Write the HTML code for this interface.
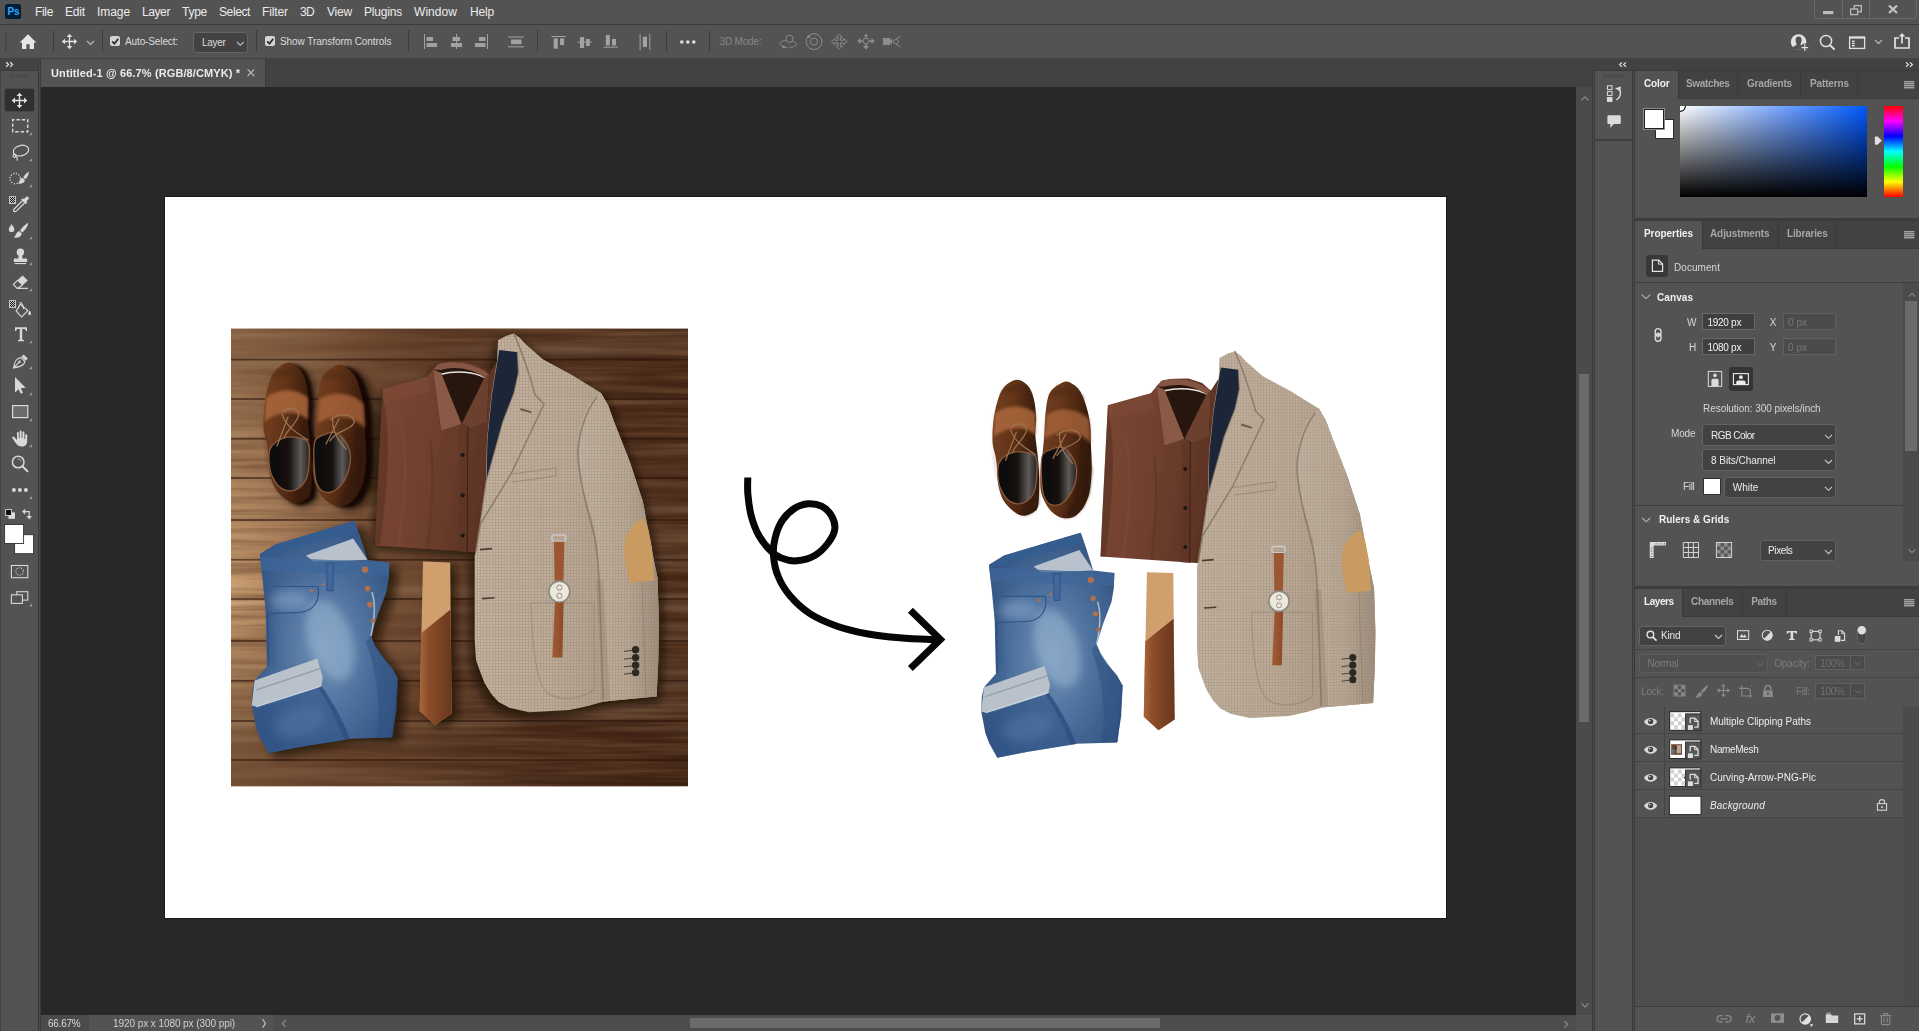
<!DOCTYPE html>
<html lang="en">
<head>
<meta charset="utf-8">
<title>Untitled-1 @ 66.7% (RGB/8/CMYK) *</title>
<style>
*{box-sizing:border-box;margin:0;padding:0}
html,body{width:1919px;height:1031px;overflow:hidden;background:#535353}
body{position:relative;font-family:"Liberation Sans",sans-serif;font-size:11px;color:#dcdcdc;line-height:1}
.a{position:absolute}
.t{position:absolute;white-space:nowrap;line-height:14px;height:14px}
svg{position:absolute;overflow:visible}
/* structural */
#menubar{left:0;top:0;width:1919px;height:24px;background:#535353}
#menuline{left:0;top:24px;width:1919px;height:1px;background:#3a3a3a}
#optbar{left:0;top:25px;width:1919px;height:33px;background:#535353}
#optline{left:0;top:58px;width:1919px;height:1px;background:#424242}
#tabbar{left:41px;top:59px;width:1552px;height:28px;background:#424242}
#canvas{left:41px;top:87px;width:1535px;height:928px;background:#282828}
#doc{left:165px;top:197px;width:1281px;height:721px;background:#fff;box-shadow:0 0 0 1px #1a1a1a}
.menu{font-size:13px;color:#ececec;top:5px}
.sep{position:absolute;width:1px;background:#3e3e3e;top:30px;height:22px}
.lbl{font-size:11px;color:#d6d6d6}
.dim{color:#8a8a8a}
</style>
</head>
<body>
<!-- ===== MENU BAR ===== -->
<div id="menubar" class="a"></div>
<div id="menuline" class="a"></div>
<!-- ===== OPTIONS BAR ===== -->
<div id="optbar" class="a"></div>
<div id="optline" class="a"></div>
<!-- ===== TAB BAR + CANVAS ===== -->
<div id="tabbar" class="a"></div>
<div id="canvas" class="a"></div>
<div id="doc" class="a"></div>
<!--ART-START-->
<svg width="1919" height="1031" viewBox="0 0 1919 1031" style="left:0;top:0">
<defs>
<filter id="fWood" x="0" y="0" width="100%" height="100%"><feTurbulence type="fractalNoise" baseFrequency="0.006 0.16" numOctaves="3" seed="7" result="n"/><feColorMatrix in="n" type="matrix" values="0 0 0 0 .16  0 0 0 0 .07  0 0 0 0 .03  1.5 0 0 0 -0.56"/></filter>
<filter id="fWood2" x="0" y="0" width="100%" height="100%"><feTurbulence type="fractalNoise" baseFrequency="0.004 0.07" numOctaves="2" seed="3" result="n"/><feColorMatrix in="n" type="matrix" values="0 0 0 0 1  0 0 0 0 .78  0 0 0 0 .55  0 1.7 0 0 -0.7"/></filter>
<filter id="fSh" x="-20%" y="-20%" width="140%" height="140%"><feGaussianBlur stdDeviation="4"/></filter>
<filter id="fB2" x="-20%" y="-20%" width="140%" height="140%"><feGaussianBlur stdDeviation="1.6"/></filter>
<filter id="fB4" x="-30%" y="-30%" width="160%" height="160%"><feGaussianBlur stdDeviation="4.5"/></filter>
<filter id="fSoft" x="-5%" y="-5%" width="110%" height="110%"><feGaussianBlur stdDeviation="0.55"/></filter>
<linearGradient id="gWood" x1="0" y1="0" x2="1" y2="0"><stop offset="0" stop-color="#ab815b"/><stop offset=".1" stop-color="#9c7351"/><stop offset=".28" stop-color="#80563a"/><stop offset=".48" stop-color="#65412b"/><stop offset=".68" stop-color="#51311f"/><stop offset="1" stop-color="#482918"/></linearGradient>
<linearGradient id="gWoodV" x1="0" y1="0" x2="0" y2="1"><stop offset="0" stop-color="#2a1206" stop-opacity=".3"/><stop offset=".3" stop-color="#2a1206" stop-opacity=".06"/><stop offset=".6" stop-color="#2a1206" stop-opacity=".1"/><stop offset="1" stop-color="#2a1206" stop-opacity=".45"/></linearGradient>
<linearGradient id="gShoe" x1="0" y1="0" x2="1" y2="0.25"><stop offset="0" stop-color="#74401f"/><stop offset=".45" stop-color="#643519"/><stop offset="1" stop-color="#35190a"/></linearGradient>
<linearGradient id="gIn" x1="0" y1="0" x2="1" y2="0"><stop offset="0" stop-color="#0c0a09"/><stop offset=".5" stop-color="#151211"/><stop offset=".78" stop-color="#5e5b59"/><stop offset="1" stop-color="#262221"/></linearGradient>
<linearGradient id="gShirt" x1="0" y1="0" x2="1" y2="0.25"><stop offset="0" stop-color="#7a4735"/><stop offset=".5" stop-color="#71412f"/><stop offset="1" stop-color="#5c3324"/></linearGradient>
<radialGradient id="gJeans" cx=".5" cy=".55" r=".62"><stop offset="0" stop-color="#7090b4"/><stop offset=".5" stop-color="#4c6f9c"/><stop offset="1" stop-color="#2f4f7d"/></radialGradient>
<linearGradient id="gTie" x1="0" y1="0" x2="1" y2="0"><stop offset="0" stop-color="#a96638"/><stop offset=".3" stop-color="#8a4c2a"/><stop offset="1" stop-color="#6a371d"/></linearGradient>
<linearGradient id="gStrap" x1="0" y1="0" x2="1" y2="0"><stop offset="0" stop-color="#a35c34"/><stop offset="1" stop-color="#8a4a28"/></linearGradient>
<linearGradient id="gBlz" x1="0" y1="0" x2="1" y2="0.15"><stop offset="0" stop-color="#c3b3a1"/><stop offset=".55" stop-color="#bcab98"/><stop offset="1" stop-color="#a99986"/></linearGradient>
<linearGradient id="gSlv" x1="0" y1="0" x2="1" y2="0"><stop offset="0" stop-color="#c2b3a2"/><stop offset=".6" stop-color="#b8a895"/><stop offset="1" stop-color="#a08f7e"/></linearGradient>
<pattern id="pCheck" width="3" height="3" patternUnits="userSpaceOnUse"><rect width="3" height="3" fill="none"/><path d="M0 .5 H3 M.5 0 V3" stroke="#85705c" stroke-width=".7"/></pattern>
<radialGradient id="gWoodL" gradientUnits="userSpaceOnUse" cx="225" cy="590" r="150"><stop offset="0" stop-color="#ecbf8c" stop-opacity=".6"/><stop offset=".5" stop-color="#e0b080" stop-opacity=".25"/><stop offset="1" stop-color="#e0b080" stop-opacity="0"/></radialGradient>
<clipPath id="cJeans"><path d="M260.0 557.0 L260.0 554.0 L275.4 544.4 L354.5 520.8 L360.0 536.0 L367.5 559.7 L389.4 562.4 L388.8 578.0 L386.4 592.0 L378.0 614.0 L371.0 636.0 L375.0 646.0 L381.0 655.5 L392.0 668.0 L397.6 678.0 L396.4 710.0 L392.0 737.4 L350.0 738.8 L300.0 747.0 L268.5 753.2 L260.0 738.0 L256.0 727.5 L251.8 705.5 L252.4 690.0 L254.6 680.4 L267.0 666.5 L265.7 611.0 L263.0 583.0 Z"/></clipPath>
<clipPath id="cPhoto"><rect x="231" y="328.4" width="457" height="458"/></clipPath>
</defs>
<g clip-path="url(#cPhoto)"><rect x="231" y="328.4" width="457" height="458" fill="url(#gWood)"/><rect x="231" y="328.4" width="457" height="458" fill="url(#gWoodV)"/><rect x="231" y="328.4" width="457" height="458" fill="url(#gWoodL)"/><rect x="231" y="328.4" width="457" height="458" filter="url(#fWood)" fill="#000"/><rect x="231" y="328.4" width="457" height="458" filter="url(#fWood2)" opacity=".2"/><rect x="231" y="358.7" width="457" height="1.8" fill="#2a140a" opacity=".6"/><rect x="231" y="398.1" width="457" height="1.8" fill="#2a140a" opacity=".6"/><rect x="231" y="437.8" width="457" height="1.8" fill="#2a140a" opacity=".6"/><rect x="231" y="477.1" width="457" height="1.8" fill="#2a140a" opacity=".6"/><rect x="231" y="519.1" width="457" height="1.8" fill="#2a140a" opacity=".6"/><rect x="231" y="558.9" width="457" height="1.8" fill="#2a140a" opacity=".6"/><rect x="231" y="598.1" width="457" height="1.8" fill="#2a140a" opacity=".6"/><rect x="231" y="640.1" width="457" height="1.8" fill="#2a140a" opacity=".6"/><rect x="231" y="679.9" width="457" height="1.8" fill="#2a140a" opacity=".6"/><rect x="231" y="720.1" width="457" height="1.8" fill="#2a140a" opacity=".6"/><rect x="231" y="759.1" width="457" height="1.8" fill="#2a140a" opacity=".6"/><g fill="#120804" opacity=".7" filter="url(#fSh)"><path d="M288.4 362.8 L275.2 370.5 L268.2 386.0 L264.3 406.2 L263.5 427.9 L266.6 441.9 L268.2 454.3 L269.7 472.9 L275.2 488.4 L286.0 499.3 L295.3 503.2 L306.2 499.3 L310.8 491.5 L311.6 463.6 L310.1 441.9 L307.7 420.2 L308.5 401.5 L306.2 382.9 L300.0 369.0 Z" transform="translate(7 4)"/><path d="M337.2 365.1 L323.3 375.2 L318.6 393.8 L317.1 417.1 L315.5 435.7 L313.2 454.3 L313.2 476.0 L317.1 488.4 L324.8 499.3 L335.7 505.5 L348.1 503.9 L357.4 494.6 L363.6 479.1 L365.9 455.8 L365.1 429.5 L364.4 409.3 L360.5 390.7 L354.3 375.2 L346.5 367.4 Z" transform="translate(12 5)"/><path d="M382.6 389.0 L427.0 376.8 L433.0 369.6 L438.0 364.0 L450.0 361.6 L466.0 361.4 L480.0 366.0 L489.0 374.0 L497.0 361.5 L494.0 395.0 L489.0 440.0 L486.5 480.0 L482.0 520.0 L478.0 552.4 L375.0 545.4 L377.0 500.0 L380.0 440.0 Z" transform="translate(-3 5)"/><path d="M260.0 557.0 L260.0 554.0 L275.4 544.4 L354.5 520.8 L360.0 536.0 L367.5 559.7 L389.4 562.4 L388.8 578.0 L386.4 592.0 L378.0 614.0 L371.0 636.0 L375.0 646.0 L381.0 655.5 L392.0 668.0 L397.6 678.0 L396.4 710.0 L392.0 737.4 L350.0 738.8 L300.0 747.0 L268.5 753.2 L260.0 738.0 L256.0 727.5 L251.8 705.5 L252.4 690.0 L254.6 680.4 L267.0 666.5 L265.7 611.0 L263.0 583.0 Z" transform="translate(8 5)"/><path d="M423.0 561.6 L450.2 562.4 L451.6 713.7 L434.9 724.8 L419.7 710.9 Z" transform="translate(6 4)"/><path d="M498.0 340.2 L506.0 336.0 L513.8 333.4 L520.0 338.0 L525.0 343.6 L542.8 359.2 L572.0 375.0 L600.8 392.7 L608.0 405.0 L614.0 421.7 L629.8 461.8 L643.0 502.0 L652.0 551.0 L657.6 578.3 L659.0 623.0 L658.4 660.0 L656.6 696.6 L630.0 699.0 L604.0 701.4 L588.0 706.0 L569.5 710.0 L529.4 712.3 L509.3 707.8 L498.6 702.0 L491.5 694.3 L484.5 683.0 L480.3 672.0 L476.0 660.0 L474.7 640.0 L474.7 556.0 L476.0 551.0 L480.0 524.0 L486.0 480.0 L487.0 440.0 L491.5 395.0 L497.0 361.5 Z" transform="translate(-5 6)"/><path d="M498.0 340.2 L506.0 336.0 L513.8 333.4 L520.0 338.0 L525.0 343.6 L542.8 359.2 L572.0 375.0 L600.8 392.7 L608.0 405.0 L614.0 421.7 L629.8 461.8 L643.0 502.0 L652.0 551.0 L657.6 578.3 L659.0 623.0 L658.4 660.0 L656.6 696.6 L630.0 699.0 L604.0 701.4 L588.0 706.0 L569.5 710.0 L529.4 712.3 L509.3 707.8 L498.6 702.0 L491.5 694.3 L484.5 683.0 L480.3 672.0 L476.0 660.0 L474.7 640.0 L474.7 556.0 L476.0 551.0 L480.0 524.0 L486.0 480.0 L487.0 440.0 L491.5 395.0 L497.0 361.5 Z" transform="translate(4 5)"/></g><g fill="#0c0502" opacity=".8" filter="url(#fB2)"><path d="M288.4 362.8 C284.3 363.1 278.6 366.6 275.2 370.5 C271.8 374.4 270.0 380.1 268.2 386.0 C266.4 391.9 265.1 399.2 264.3 406.2 C263.5 413.2 263.1 421.9 263.5 427.9 C263.9 433.8 265.8 437.5 266.6 441.9 C267.4 446.3 267.7 449.1 268.2 454.3 C268.7 459.5 268.5 467.2 269.7 472.9 C270.9 478.6 272.5 484.0 275.2 488.4 C277.9 492.8 282.6 496.8 286.0 499.3 C289.4 501.8 291.9 503.2 295.3 503.2 C298.7 503.2 303.6 501.2 306.2 499.3 C308.8 497.4 309.9 497.4 310.8 491.5 C311.7 485.6 311.7 471.9 311.6 463.6 C311.5 455.3 310.8 449.1 310.1 441.9 C309.5 434.7 308.0 426.9 307.7 420.2 C307.4 413.5 308.8 407.7 308.5 401.5 C308.2 395.3 307.6 388.3 306.2 382.9 C304.8 377.5 303.0 372.4 300.0 369.0 C297.0 365.6 292.5 362.6 288.4 362.8 Z" transform="translate(5 2)"/><path d="M337.2 365.1 C333.3 366.4 326.4 370.4 323.3 375.2 C320.2 380.0 319.6 386.8 318.6 393.8 C317.6 400.8 317.6 410.1 317.1 417.1 C316.6 424.1 316.1 429.5 315.5 435.7 C314.9 441.9 313.6 447.6 313.2 454.3 C312.8 461.0 312.5 470.3 313.2 476.0 C313.9 481.7 315.2 484.5 317.1 488.4 C319.0 492.3 321.7 496.4 324.8 499.3 C327.9 502.2 331.8 504.7 335.7 505.5 C339.6 506.3 344.5 505.7 348.1 503.9 C351.7 502.1 354.8 498.7 357.4 494.6 C360.0 490.5 362.2 485.6 363.6 479.1 C365.0 472.6 365.6 464.1 365.9 455.8 C366.1 447.5 365.4 437.2 365.1 429.5 C364.9 421.8 365.2 415.8 364.4 409.3 C363.6 402.8 362.2 396.4 360.5 390.7 C358.8 385.0 356.6 379.1 354.3 375.2 C352.0 371.3 349.4 369.1 346.5 367.4 C343.6 365.7 341.1 363.8 337.2 365.1 Z" transform="translate(7 2)"/></g></g>
<g filter="url(#fSoft)" clip-path="url(#cPhoto)"><path d="M288.4 362.8 C284.3 363.1 278.6 366.6 275.2 370.5 C271.8 374.4 270.0 380.1 268.2 386.0 C266.4 391.9 265.1 399.2 264.3 406.2 C263.5 413.2 263.1 421.9 263.5 427.9 C263.9 433.8 265.8 437.5 266.6 441.9 C267.4 446.3 267.7 449.1 268.2 454.3 C268.7 459.5 268.5 467.2 269.7 472.9 C270.9 478.6 272.5 484.0 275.2 488.4 C277.9 492.8 282.6 496.8 286.0 499.3 C289.4 501.8 291.9 503.2 295.3 503.2 C298.7 503.2 303.6 501.2 306.2 499.3 C308.8 497.4 309.9 497.4 310.8 491.5 C311.7 485.6 311.7 471.9 311.6 463.6 C311.5 455.3 310.8 449.1 310.1 441.9 C309.5 434.7 308.0 426.9 307.7 420.2 C307.4 413.5 308.8 407.7 308.5 401.5 C308.2 395.3 307.6 388.3 306.2 382.9 C304.8 377.5 303.0 372.4 300.0 369.0 C297.0 365.6 292.5 362.6 288.4 362.8 Z" fill="url(#gShoe)"/><path d="M337.2 365.1 C333.3 366.4 326.4 370.4 323.3 375.2 C320.2 380.0 319.6 386.8 318.6 393.8 C317.6 400.8 317.6 410.1 317.1 417.1 C316.6 424.1 316.1 429.5 315.5 435.7 C314.9 441.9 313.6 447.6 313.2 454.3 C312.8 461.0 312.5 470.3 313.2 476.0 C313.9 481.7 315.2 484.5 317.1 488.4 C319.0 492.3 321.7 496.4 324.8 499.3 C327.9 502.2 331.8 504.7 335.7 505.5 C339.6 506.3 344.5 505.7 348.1 503.9 C351.7 502.1 354.8 498.7 357.4 494.6 C360.0 490.5 362.2 485.6 363.6 479.1 C365.0 472.6 365.6 464.1 365.9 455.8 C366.1 447.5 365.4 437.2 365.1 429.5 C364.9 421.8 365.2 415.8 364.4 409.3 C363.6 402.8 362.2 396.4 360.5 390.7 C358.8 385.0 356.6 379.1 354.3 375.2 C352.0 371.3 349.4 369.1 346.5 367.4 C343.6 365.7 341.1 363.8 337.2 365.1 Z" fill="url(#gShoe)"/><g filter="url(#fB2)"><path d="M266 398 C276 388 298 388 308 398 L308 420 C298 410 278 410 264.5 422 Z" fill="#b06a3e" opacity=".8"/><path d="M319 400 C330 390 352 392 363.6 404 L365 428 C352 415 332 413 317 424 Z" fill="#b06a3e" opacity=".72"/><path d="M271 378 C279 366 298 364 305.6 380 C299 374 280 374.5 271 378 Z" fill="#4a2513" opacity=".55"/><path d="M321.6 380 C330 368 352 368 359.6 384 C350 377 333 376.6 321.6 380 Z" fill="#4a2513" opacity=".55"/><path d="M306 425 L311.6 463 L310.8 491 L305 500 L295 503.4 C306 482 305 450 302 428 Z" fill="#341809" opacity=".75"/><path d="M360 425 L366 456 L363.6 480 L357 495 L347 504 L336 505.6 C354 486 357 452 354 428 Z" fill="#341809" opacity=".8"/><path d="M264 425 C265 450 268 470 276 489 L270 474 L266 442 Z" fill="#4a2513" opacity=".5"/></g><path d="M270.5 448.1 C272.6 444.2 277.3 440.6 281.4 438.8 C285.5 437.0 290.9 436.7 295.3 437.2 C299.7 437.7 305.4 438.5 307.7 441.9 C310.0 445.3 309.6 451.2 309.3 457.4 C309.1 463.6 308.5 473.7 306.2 479.1 C303.9 484.5 299.4 488.4 295.3 490.0 C291.2 491.6 285.3 490.7 281.4 488.4 C277.5 486.1 274.2 480.4 272.1 476.0 C270.0 471.6 269.3 466.6 269.0 462.0 C268.7 457.4 268.4 452.0 270.5 448.1 Z" fill="url(#gIn)" stroke="#8a5a3c" stroke-width="1.3"/><path d="M314.7 441.9 C316.0 437.2 318.2 437.2 321.7 435.7 C325.2 434.1 331.6 431.3 335.7 432.6 C339.8 433.9 344.1 439.3 346.5 443.4 C348.9 447.5 350.4 452.0 350.4 457.4 C350.4 462.8 348.9 470.6 346.5 476.0 C344.1 481.4 339.6 487.4 335.7 490.0 C331.8 492.6 326.5 492.8 323.3 491.5 C320.1 490.2 317.9 486.8 316.3 482.2 C314.8 477.6 314.3 470.3 314.0 463.6 C313.7 456.9 313.4 446.5 314.7 441.9 Z" fill="url(#gIn)" stroke="#8a5a3c" stroke-width="1.3"/><g stroke="#9c7452" stroke-width="1.2" fill="none" stroke-linecap="round"><path d="M283 412 C290 405 301 409 298 417 C295 425 287 430 284 438 M282 414 C286 427 298 434 308 440 M288 417 L277 446"/><path d="M330 420 C340 412 356 414 354 423 C350 431 336 430 330 441 M333 417 C331 429 338 441 346 449 M339 419 L326 444"/></g><path d="M382.6 389.0 L427.0 376.8 L433.0 369.6 L438.0 364.0 L450.0 361.6 L466.0 361.4 L480.0 366.0 L489.0 374.0 L497.0 361.5 L494.0 395.0 L489.0 440.0 L486.5 480.0 L482.0 520.0 L478.0 552.4 L375.0 545.4 L377.0 500.0 L380.0 440.0 Z" fill="url(#gShirt)"/><path d="M382.6 389 L427 376.8 L431 392 L384 403 Z" fill="#7d4a37" opacity=".6"/><path d="M384 403 C392 440 386 500 380 545 L375 545.4 L377 500 L380 440 L382.6 389 Z" fill="#4e2a1d" opacity=".45"/><path d="M400 420 C410 460 404 510 398 547" stroke="#7e4c38" stroke-width="3" fill="none" opacity=".45"/><path d="M430 440 C436 480 430 520 428 548" stroke="#54301f" stroke-width="2.4" fill="none" opacity=".4"/><path d="M438 364 C452 360.6 470 360.6 489 374 L487 422 L471.4 428.4 L461.4 424 L441 431 L433 369.6 Z" fill="#26150f"/><path d="M441 374.2 C456 370.4 474 371.4 487 378.6" stroke="#e9e6e2" stroke-width="1.5" fill="none"/><path d="M433 369.6 L441 372.8 L461.6 424 L441 431 Z" fill="#8b5a46"/><path d="M489 374 L484 378.4 L461.6 424 L471.4 428.4 L487 422 Z" fill="#6c3f2e"/><path d="M433 369.6 L438 364 C452 360.6 470 360.6 489 374 L484.6 378 C470 366.8 452 366.6 440.6 370 Z" fill="#865644"/><path d="M459 426 L467.6 427.4 L467 552 L458.4 551.4 Z" fill="#5e3626" opacity=".7"/><path d="M467.8 427 L467.2 552" stroke="#3b2018" stroke-width="1"/><circle cx="462.6" cy="455" r="2.1" fill="#1c1412"/><circle cx="462.6" cy="495.3" r="2.1" fill="#1c1412"/><circle cx="462.6" cy="535.5" r="2.1" fill="#1c1412"/><path d="M260.0 557.0 L260.0 554.0 L275.4 544.4 L354.5 520.8 L360.0 536.0 L367.5 559.7 L389.4 562.4 L388.8 578.0 L386.4 592.0 L378.0 614.0 L371.0 636.0 L375.0 646.0 L381.0 655.5 L392.0 668.0 L397.6 678.0 L396.4 710.0 L392.0 737.4 L350.0 738.8 L300.0 747.0 L268.5 753.2 L260.0 738.0 L256.0 727.5 L251.8 705.5 L252.4 690.0 L254.6 680.4 L267.0 666.5 L265.7 611.0 L263.0 583.0 Z" fill="url(#gJeans)"/><path d="M305.9 555.6 L353.2 538.6 L367.4 559.8 L314 561.8 Z" fill="#b9c2cc"/><path d="M260 557 L389.4 562.4 L388.6 575.5 L261.6 570.5 Z" fill="#3f679a" opacity=".75"/><path d="M260 554 L275.4 544.4 L354.5 520.8 L358 531 L280 553 L262 558 Z" fill="#355d90" opacity=".8"/><g clip-path="url(#cJeans)"><g filter="url(#fB4)"><ellipse cx="330" cy="640" rx="22" ry="42" fill="#9bb8d6" opacity=".55" transform="rotate(-18 330 640)"/><ellipse cx="300" cy="722" rx="26" ry="14" fill="#88a8cc" opacity=".45" transform="rotate(-14 300 722)"/><ellipse cx="290" cy="600" rx="18" ry="10" fill="#93b2d2" opacity=".45"/><path d="M262 583 L267 666 L274 664 L270 584 Z" fill="#2c4f80" opacity=".6"/></g></g><path d="M272 586.5 H318 C320.5 600 314 611 300 612.4 L270 613.6" stroke="#2f5486" stroke-width="1.2" fill="none"/><path d="M267.4 612 L268.4 666 M392 737 C394 712 397 690 397.2 678" stroke="#2a4b7a" stroke-width="2" fill="none" opacity=".6"/><path d="M371 636 C376 650 390 664 397 678 L392 737.4 L376 737.8 C382 706 376 670 366 642 Z" fill="#2f5284" opacity=".55"/><path d="M372 592 C376 604 374 622 371 636" stroke="#c4ccd6" stroke-width="1.6" fill="none" opacity=".8"/><path d="M258 708.8 L321 686.5 C332 702 344 724 349.6 739.4 L300 747 L268.5 753.2 L260 738 L256 727.5 Z" fill="#2f5386" opacity=".55"/><path d="M254.6 680.4 L317.2 658.6 L322.8 677.6 L321.4 686 L256.4 706.8 L251.8 705.5 Z" fill="#b9c1cb"/><path d="M256 690 L320.5 668.5" stroke="#8d99a8" stroke-width="1.4" opacity=".8"/><path d="M256.4 706.8 L321.4 686" stroke="#dfe5ec" stroke-width="1.2" opacity=".8"/><path d="M321.4 686 C332 700 344 722 350 738.8 L344 739.6 C338 722 328 702 318 688 Z" fill="#294a7c" opacity=".6"/><circle cx="365" cy="569.6" r="3.2" fill="#b3714a"/><circle cx="367.4" cy="588.6" r="2.8" fill="#b3714a"/><circle cx="369.8" cy="604.6" r="2.8" fill="#b3714a"/><circle cx="372.6" cy="620.6" r="2.2" fill="#a86a46"/><circle cx="311.4" cy="590.6" r="1.6" fill="#b3714a"/><circle cx="323.4" cy="584.6" r="1.4" fill="#b3714a"/><path d="M326.6 563 L333.4 563.4 L333 591 L327 590.6 Z" fill="#3f679a" stroke="#2b4c7c" stroke-width=".8"/><path d="M423.0 561.6 L450.2 562.4 L451.6 713.7 L434.9 724.8 L419.7 710.9 Z" fill="#cf9f6d"/><path d="M421.1 633.2 L450.5 609.6 L451.6 713.7 L434.9 724.8 L419.7 710.9 Z" fill="url(#gTie)"/><path d="M498.0 340.2 L506.0 336.0 L513.8 333.4 L520.0 338.0 L525.0 343.6 L542.8 359.2 L572.0 375.0 L600.8 392.7 L608.0 405.0 L614.0 421.7 L629.8 461.8 L643.0 502.0 L652.0 551.0 L657.6 578.3 L659.0 623.0 L658.4 660.0 L656.6 696.6 L630.0 699.0 L604.0 701.4 L588.0 706.0 L569.5 710.0 L529.4 712.3 L509.3 707.8 L498.6 702.0 L491.5 694.3 L484.5 683.0 L480.3 672.0 L476.0 660.0 L474.7 640.0 L474.7 556.0 L476.0 551.0 L480.0 524.0 L486.0 480.0 L487.0 440.0 L491.5 395.0 L497.0 361.5 Z" fill="url(#gBlz)"/><path d="M498.0 340.2 L506.0 336.0 L513.8 333.4 L520.0 338.0 L525.0 343.6 L542.8 359.2 L572.0 375.0 L600.8 392.7 L608.0 405.0 L614.0 421.7 L629.8 461.8 L643.0 502.0 L652.0 551.0 L657.6 578.3 L659.0 623.0 L658.4 660.0 L656.6 696.6 L630.0 699.0 L604.0 701.4 L588.0 706.0 L569.5 710.0 L529.4 712.3 L509.3 707.8 L498.6 702.0 L491.5 694.3 L484.5 683.0 L480.3 672.0 L476.0 660.0 L474.7 640.0 L474.7 556.0 L476.0 551.0 L480.0 524.0 L486.0 480.0 L487.0 440.0 L491.5 395.0 L497.0 361.5 Z" fill="url(#pCheck)" opacity=".32"/><path d="M499.3 350.0 L517.4 352.3 L518.4 372.6 L514.0 392.7 L502.8 421.7 L491.7 461.8 L486.6 480.0 L487.4 439.5 L491.9 395.0 L497.4 361.5 Z" fill="#1d2737"/><path d="M600.8 392.7 L608.0 405.0 L614.0 421.7 L629.8 461.8 L643.0 502.0 L652.0 551.0 L657.6 578.3 L659.0 623.0 L658.4 660.0 L656.6 696.6 L630.0 699.0 L604.0 701.4 L600.4 640.0 L600.0 595.0 L595.0 527.0 L584.0 493.0 L578.0 455.0 L580.0 428.0 L587.0 406.0 Z" fill="url(#gSlv)"/><path d="M600.8 392.7 L608.0 405.0 L614.0 421.7 L629.8 461.8 L643.0 502.0 L652.0 551.0 L657.6 578.3 L659.0 623.0 L658.4 660.0 L656.6 696.6 L630.0 699.0 L604.0 701.4 L600.4 640.0 L600.0 595.0 L595.0 527.0 L584.0 493.0 L578.0 455.0 L580.0 428.0 L587.0 406.0 Z" fill="url(#pCheck)" opacity=".3"/><path d="M597 397 C584 412 577.6 440 578 456 C580 492 592 520 596 545 C599 565 600 590 603 700" stroke="#7f7060" stroke-width="1.6" fill="none" opacity=".75"/><path d="M596 580 L603 700 L610 700 L603 580 Z" fill="#8c7c6c" opacity=".35"/><path d="M517.4 352.3 L518.4 372.6 L514 392.7 L502.8 421.7 L491.7 461.8 L486.6 480 L476 551" stroke="#8a7968" stroke-width="1.2" fill="none" opacity=".7"/><path d="M513.8 333.4 C522 352 530 376 535.2 395 L544 404 L511.5 473 L480.3 524.3 L476 551" stroke="#85735f" stroke-width="1.5" fill="none" opacity=".85"/><path d="M520.4 409 L531.4 412.4" stroke="#6a5a4c" stroke-width="2"/><path d="M512 474 L556 468 L556 476 L512 482" stroke="#96846f" stroke-width="1.1" fill="none" opacity=".8"/><path d="M531 603 H594 V690 C580 700 560 702 546 692 C536 680 532 650 531 603 Z" stroke="#96846f" stroke-width="1.1" fill="none" opacity=".7"/><path d="M482 598.6 L494.6 597.8" stroke="#4a3d33" stroke-width="1.6"/><path d="M480 549.6 L492 548.6" stroke="#4a3d33" stroke-width="1.6"/><path d="M643.4 517.4 L648.6 530.0 L652.0 548.0 L654.4 580.6 L629.8 583.0 L625.6 566.0 L624.0 550.0 L625.8 536.0 L633.0 525.0 Z" fill="#c99b60"/><path d="M642 583 L646 697" stroke="#8c7c6c" stroke-width="1" opacity=".7"/><circle cx="635.6" cy="649.8" r="3.7" fill="#2a2c24"/><path d="M624 651.4 L632 650.4" stroke="#4a4036" stroke-width="1"/><circle cx="635.6" cy="657.6" r="3.7" fill="#2a2c24"/><path d="M624 659.2 L632 658.2" stroke="#4a4036" stroke-width="1"/><circle cx="635.6" cy="665.3" r="3.7" fill="#2a2c24"/><path d="M624 666.9 L632 665.9" stroke="#4a4036" stroke-width="1"/><circle cx="635.6" cy="672.6" r="3.7" fill="#2a2c24"/><path d="M624 674.2 L632 673.2" stroke="#4a4036" stroke-width="1"/><path d="M553.9 540 L564.4 540 L563.4 581 L554.6 581 Z" fill="#9b5631"/><path d="M554.8 602 L563.6 602 L562.4 657.6 L552.4 657.6 Z" fill="url(#gStrap)"/><rect x="552" y="535" width="13.6" height="6" rx="1.6" fill="none" stroke="#c9c9c9" stroke-width="1.6"/><circle cx="559.4" cy="591.6" r="11.3" fill="#8c8a86"/><circle cx="559.4" cy="591.6" r="9.6" fill="#ece8dc"/><circle cx="559.4" cy="587.6" r="2.6" fill="none" stroke="#8a867c" stroke-width=".9"/><circle cx="559.4" cy="595.8" r="2.6" fill="none" stroke="#8a867c" stroke-width=".9"/></g>
<g filter="url(#fSoft)" transform="translate(737.5 28.6) scale(0.968)"><path d="M288.4 362.8 C284.3 363.1 278.6 366.6 275.2 370.5 C271.8 374.4 270.0 380.1 268.2 386.0 C266.4 391.9 265.1 399.2 264.3 406.2 C263.5 413.2 263.1 421.9 263.5 427.9 C263.9 433.8 265.8 437.5 266.6 441.9 C267.4 446.3 267.7 449.1 268.2 454.3 C268.7 459.5 268.5 467.2 269.7 472.9 C270.9 478.6 272.5 484.0 275.2 488.4 C277.9 492.8 282.6 496.8 286.0 499.3 C289.4 501.8 291.9 503.2 295.3 503.2 C298.7 503.2 303.6 501.2 306.2 499.3 C308.8 497.4 309.9 497.4 310.8 491.5 C311.7 485.6 311.7 471.9 311.6 463.6 C311.5 455.3 310.8 449.1 310.1 441.9 C309.5 434.7 308.0 426.9 307.7 420.2 C307.4 413.5 308.8 407.7 308.5 401.5 C308.2 395.3 307.6 388.3 306.2 382.9 C304.8 377.5 303.0 372.4 300.0 369.0 C297.0 365.6 292.5 362.6 288.4 362.8 Z" fill="url(#gShoe)"/><path d="M337.2 365.1 C333.3 366.4 326.4 370.4 323.3 375.2 C320.2 380.0 319.6 386.8 318.6 393.8 C317.6 400.8 317.6 410.1 317.1 417.1 C316.6 424.1 316.1 429.5 315.5 435.7 C314.9 441.9 313.6 447.6 313.2 454.3 C312.8 461.0 312.5 470.3 313.2 476.0 C313.9 481.7 315.2 484.5 317.1 488.4 C319.0 492.3 321.7 496.4 324.8 499.3 C327.9 502.2 331.8 504.7 335.7 505.5 C339.6 506.3 344.5 505.7 348.1 503.9 C351.7 502.1 354.8 498.7 357.4 494.6 C360.0 490.5 362.2 485.6 363.6 479.1 C365.0 472.6 365.6 464.1 365.9 455.8 C366.1 447.5 365.4 437.2 365.1 429.5 C364.9 421.8 365.2 415.8 364.4 409.3 C363.6 402.8 362.2 396.4 360.5 390.7 C358.8 385.0 356.6 379.1 354.3 375.2 C352.0 371.3 349.4 369.1 346.5 367.4 C343.6 365.7 341.1 363.8 337.2 365.1 Z" fill="url(#gShoe)"/><g filter="url(#fB2)"><path d="M266 398 C276 388 298 388 308 398 L308 420 C298 410 278 410 264.5 422 Z" fill="#b06a3e" opacity=".8"/><path d="M319 400 C330 390 352 392 363.6 404 L365 428 C352 415 332 413 317 424 Z" fill="#b06a3e" opacity=".72"/><path d="M271 378 C279 366 298 364 305.6 380 C299 374 280 374.5 271 378 Z" fill="#4a2513" opacity=".55"/><path d="M321.6 380 C330 368 352 368 359.6 384 C350 377 333 376.6 321.6 380 Z" fill="#4a2513" opacity=".55"/><path d="M306 425 L311.6 463 L310.8 491 L305 500 L295 503.4 C306 482 305 450 302 428 Z" fill="#341809" opacity=".75"/><path d="M360 425 L366 456 L363.6 480 L357 495 L347 504 L336 505.6 C354 486 357 452 354 428 Z" fill="#341809" opacity=".8"/><path d="M264 425 C265 450 268 470 276 489 L270 474 L266 442 Z" fill="#4a2513" opacity=".5"/></g><path d="M270.5 448.1 C272.6 444.2 277.3 440.6 281.4 438.8 C285.5 437.0 290.9 436.7 295.3 437.2 C299.7 437.7 305.4 438.5 307.7 441.9 C310.0 445.3 309.6 451.2 309.3 457.4 C309.1 463.6 308.5 473.7 306.2 479.1 C303.9 484.5 299.4 488.4 295.3 490.0 C291.2 491.6 285.3 490.7 281.4 488.4 C277.5 486.1 274.2 480.4 272.1 476.0 C270.0 471.6 269.3 466.6 269.0 462.0 C268.7 457.4 268.4 452.0 270.5 448.1 Z" fill="url(#gIn)" stroke="#8a5a3c" stroke-width="1.3"/><path d="M314.7 441.9 C316.0 437.2 318.2 437.2 321.7 435.7 C325.2 434.1 331.6 431.3 335.7 432.6 C339.8 433.9 344.1 439.3 346.5 443.4 C348.9 447.5 350.4 452.0 350.4 457.4 C350.4 462.8 348.9 470.6 346.5 476.0 C344.1 481.4 339.6 487.4 335.7 490.0 C331.8 492.6 326.5 492.8 323.3 491.5 C320.1 490.2 317.9 486.8 316.3 482.2 C314.8 477.6 314.3 470.3 314.0 463.6 C313.7 456.9 313.4 446.5 314.7 441.9 Z" fill="url(#gIn)" stroke="#8a5a3c" stroke-width="1.3"/><g stroke="#9c7452" stroke-width="1.2" fill="none" stroke-linecap="round"><path d="M283 412 C290 405 301 409 298 417 C295 425 287 430 284 438 M282 414 C286 427 298 434 308 440 M288 417 L277 446"/><path d="M330 420 C340 412 356 414 354 423 C350 431 336 430 330 441 M333 417 C331 429 338 441 346 449 M339 419 L326 444"/></g><path d="M382.6 389.0 L427.0 376.8 L433.0 369.6 L438.0 364.0 L450.0 361.6 L466.0 361.4 L480.0 366.0 L489.0 374.0 L497.0 361.5 L494.0 395.0 L489.0 440.0 L486.5 480.0 L482.0 520.0 L478.0 552.4 L375.0 545.4 L377.0 500.0 L380.0 440.0 Z" fill="url(#gShirt)"/><path d="M382.6 389 L427 376.8 L431 392 L384 403 Z" fill="#7d4a37" opacity=".6"/><path d="M384 403 C392 440 386 500 380 545 L375 545.4 L377 500 L380 440 L382.6 389 Z" fill="#4e2a1d" opacity=".45"/><path d="M400 420 C410 460 404 510 398 547" stroke="#7e4c38" stroke-width="3" fill="none" opacity=".45"/><path d="M430 440 C436 480 430 520 428 548" stroke="#54301f" stroke-width="2.4" fill="none" opacity=".4"/><path d="M438 364 C452 360.6 470 360.6 489 374 L487 422 L471.4 428.4 L461.4 424 L441 431 L433 369.6 Z" fill="#26150f"/><path d="M441 374.2 C456 370.4 474 371.4 487 378.6" stroke="#e9e6e2" stroke-width="1.5" fill="none"/><path d="M433 369.6 L441 372.8 L461.6 424 L441 431 Z" fill="#8b5a46"/><path d="M489 374 L484 378.4 L461.6 424 L471.4 428.4 L487 422 Z" fill="#6c3f2e"/><path d="M433 369.6 L438 364 C452 360.6 470 360.6 489 374 L484.6 378 C470 366.8 452 366.6 440.6 370 Z" fill="#865644"/><path d="M459 426 L467.6 427.4 L467 552 L458.4 551.4 Z" fill="#5e3626" opacity=".7"/><path d="M467.8 427 L467.2 552" stroke="#3b2018" stroke-width="1"/><circle cx="462.6" cy="455" r="2.1" fill="#1c1412"/><circle cx="462.6" cy="495.3" r="2.1" fill="#1c1412"/><circle cx="462.6" cy="535.5" r="2.1" fill="#1c1412"/><path d="M260.0 557.0 L260.0 554.0 L275.4 544.4 L354.5 520.8 L360.0 536.0 L367.5 559.7 L389.4 562.4 L388.8 578.0 L386.4 592.0 L378.0 614.0 L371.0 636.0 L375.0 646.0 L381.0 655.5 L392.0 668.0 L397.6 678.0 L396.4 710.0 L392.0 737.4 L350.0 738.8 L300.0 747.0 L268.5 753.2 L260.0 738.0 L256.0 727.5 L251.8 705.5 L252.4 690.0 L254.6 680.4 L267.0 666.5 L265.7 611.0 L263.0 583.0 Z" fill="url(#gJeans)"/><path d="M305.9 555.6 L353.2 538.6 L367.4 559.8 L314 561.8 Z" fill="#b9c2cc"/><path d="M260 557 L389.4 562.4 L388.6 575.5 L261.6 570.5 Z" fill="#3f679a" opacity=".75"/><path d="M260 554 L275.4 544.4 L354.5 520.8 L358 531 L280 553 L262 558 Z" fill="#355d90" opacity=".8"/><g clip-path="url(#cJeans)"><g filter="url(#fB4)"><ellipse cx="330" cy="640" rx="22" ry="42" fill="#9bb8d6" opacity=".55" transform="rotate(-18 330 640)"/><ellipse cx="300" cy="722" rx="26" ry="14" fill="#88a8cc" opacity=".45" transform="rotate(-14 300 722)"/><ellipse cx="290" cy="600" rx="18" ry="10" fill="#93b2d2" opacity=".45"/><path d="M262 583 L267 666 L274 664 L270 584 Z" fill="#2c4f80" opacity=".6"/></g></g><path d="M272 586.5 H318 C320.5 600 314 611 300 612.4 L270 613.6" stroke="#2f5486" stroke-width="1.2" fill="none"/><path d="M267.4 612 L268.4 666 M392 737 C394 712 397 690 397.2 678" stroke="#2a4b7a" stroke-width="2" fill="none" opacity=".6"/><path d="M371 636 C376 650 390 664 397 678 L392 737.4 L376 737.8 C382 706 376 670 366 642 Z" fill="#2f5284" opacity=".55"/><path d="M372 592 C376 604 374 622 371 636" stroke="#c4ccd6" stroke-width="1.6" fill="none" opacity=".8"/><path d="M258 708.8 L321 686.5 C332 702 344 724 349.6 739.4 L300 747 L268.5 753.2 L260 738 L256 727.5 Z" fill="#2f5386" opacity=".55"/><path d="M254.6 680.4 L317.2 658.6 L322.8 677.6 L321.4 686 L256.4 706.8 L251.8 705.5 Z" fill="#b9c1cb"/><path d="M256 690 L320.5 668.5" stroke="#8d99a8" stroke-width="1.4" opacity=".8"/><path d="M256.4 706.8 L321.4 686" stroke="#dfe5ec" stroke-width="1.2" opacity=".8"/><path d="M321.4 686 C332 700 344 722 350 738.8 L344 739.6 C338 722 328 702 318 688 Z" fill="#294a7c" opacity=".6"/><circle cx="365" cy="569.6" r="3.2" fill="#b3714a"/><circle cx="367.4" cy="588.6" r="2.8" fill="#b3714a"/><circle cx="369.8" cy="604.6" r="2.8" fill="#b3714a"/><circle cx="372.6" cy="620.6" r="2.2" fill="#a86a46"/><circle cx="311.4" cy="590.6" r="1.6" fill="#b3714a"/><circle cx="323.4" cy="584.6" r="1.4" fill="#b3714a"/><path d="M326.6 563 L333.4 563.4 L333 591 L327 590.6 Z" fill="#3f679a" stroke="#2b4c7c" stroke-width=".8"/><path d="M423.0 561.6 L450.2 562.4 L451.6 713.7 L434.9 724.8 L419.7 710.9 Z" fill="#cf9f6d"/><path d="M421.1 633.2 L450.5 609.6 L451.6 713.7 L434.9 724.8 L419.7 710.9 Z" fill="url(#gTie)"/><path d="M498.0 340.2 L506.0 336.0 L513.8 333.4 L520.0 338.0 L525.0 343.6 L542.8 359.2 L572.0 375.0 L600.8 392.7 L608.0 405.0 L614.0 421.7 L629.8 461.8 L643.0 502.0 L652.0 551.0 L657.6 578.3 L659.0 623.0 L658.4 660.0 L656.6 696.6 L630.0 699.0 L604.0 701.4 L588.0 706.0 L569.5 710.0 L529.4 712.3 L509.3 707.8 L498.6 702.0 L491.5 694.3 L484.5 683.0 L480.3 672.0 L476.0 660.0 L474.7 640.0 L474.7 556.0 L476.0 551.0 L480.0 524.0 L486.0 480.0 L487.0 440.0 L491.5 395.0 L497.0 361.5 Z" fill="url(#gBlz)"/><path d="M498.0 340.2 L506.0 336.0 L513.8 333.4 L520.0 338.0 L525.0 343.6 L542.8 359.2 L572.0 375.0 L600.8 392.7 L608.0 405.0 L614.0 421.7 L629.8 461.8 L643.0 502.0 L652.0 551.0 L657.6 578.3 L659.0 623.0 L658.4 660.0 L656.6 696.6 L630.0 699.0 L604.0 701.4 L588.0 706.0 L569.5 710.0 L529.4 712.3 L509.3 707.8 L498.6 702.0 L491.5 694.3 L484.5 683.0 L480.3 672.0 L476.0 660.0 L474.7 640.0 L474.7 556.0 L476.0 551.0 L480.0 524.0 L486.0 480.0 L487.0 440.0 L491.5 395.0 L497.0 361.5 Z" fill="url(#pCheck)" opacity=".32"/><path d="M499.3 350.0 L517.4 352.3 L518.4 372.6 L514.0 392.7 L502.8 421.7 L491.7 461.8 L486.6 480.0 L487.4 439.5 L491.9 395.0 L497.4 361.5 Z" fill="#1d2737"/><path d="M600.8 392.7 L608.0 405.0 L614.0 421.7 L629.8 461.8 L643.0 502.0 L652.0 551.0 L657.6 578.3 L659.0 623.0 L658.4 660.0 L656.6 696.6 L630.0 699.0 L604.0 701.4 L600.4 640.0 L600.0 595.0 L595.0 527.0 L584.0 493.0 L578.0 455.0 L580.0 428.0 L587.0 406.0 Z" fill="url(#gSlv)"/><path d="M600.8 392.7 L608.0 405.0 L614.0 421.7 L629.8 461.8 L643.0 502.0 L652.0 551.0 L657.6 578.3 L659.0 623.0 L658.4 660.0 L656.6 696.6 L630.0 699.0 L604.0 701.4 L600.4 640.0 L600.0 595.0 L595.0 527.0 L584.0 493.0 L578.0 455.0 L580.0 428.0 L587.0 406.0 Z" fill="url(#pCheck)" opacity=".3"/><path d="M597 397 C584 412 577.6 440 578 456 C580 492 592 520 596 545 C599 565 600 590 603 700" stroke="#7f7060" stroke-width="1.6" fill="none" opacity=".75"/><path d="M596 580 L603 700 L610 700 L603 580 Z" fill="#8c7c6c" opacity=".35"/><path d="M517.4 352.3 L518.4 372.6 L514 392.7 L502.8 421.7 L491.7 461.8 L486.6 480 L476 551" stroke="#8a7968" stroke-width="1.2" fill="none" opacity=".7"/><path d="M513.8 333.4 C522 352 530 376 535.2 395 L544 404 L511.5 473 L480.3 524.3 L476 551" stroke="#85735f" stroke-width="1.5" fill="none" opacity=".85"/><path d="M520.4 409 L531.4 412.4" stroke="#6a5a4c" stroke-width="2"/><path d="M512 474 L556 468 L556 476 L512 482" stroke="#96846f" stroke-width="1.1" fill="none" opacity=".8"/><path d="M531 603 H594 V690 C580 700 560 702 546 692 C536 680 532 650 531 603 Z" stroke="#96846f" stroke-width="1.1" fill="none" opacity=".7"/><path d="M482 598.6 L494.6 597.8" stroke="#4a3d33" stroke-width="1.6"/><path d="M480 549.6 L492 548.6" stroke="#4a3d33" stroke-width="1.6"/><path d="M643.4 517.4 L648.6 530.0 L652.0 548.0 L654.4 580.6 L629.8 583.0 L625.6 566.0 L624.0 550.0 L625.8 536.0 L633.0 525.0 Z" fill="#c99b60"/><path d="M642 583 L646 697" stroke="#8c7c6c" stroke-width="1" opacity=".7"/><circle cx="635.6" cy="649.8" r="3.7" fill="#2a2c24"/><path d="M624 651.4 L632 650.4" stroke="#4a4036" stroke-width="1"/><circle cx="635.6" cy="657.6" r="3.7" fill="#2a2c24"/><path d="M624 659.2 L632 658.2" stroke="#4a4036" stroke-width="1"/><circle cx="635.6" cy="665.3" r="3.7" fill="#2a2c24"/><path d="M624 666.9 L632 665.9" stroke="#4a4036" stroke-width="1"/><circle cx="635.6" cy="672.6" r="3.7" fill="#2a2c24"/><path d="M624 674.2 L632 673.2" stroke="#4a4036" stroke-width="1"/><path d="M553.9 540 L564.4 540 L563.4 581 L554.6 581 Z" fill="#9b5631"/><path d="M554.8 602 L563.6 602 L562.4 657.6 L552.4 657.6 Z" fill="url(#gStrap)"/><rect x="552" y="535" width="13.6" height="6" rx="1.6" fill="none" stroke="#c9c9c9" stroke-width="1.6"/><circle cx="559.4" cy="591.6" r="11.3" fill="#8c8a86"/><circle cx="559.4" cy="591.6" r="9.6" fill="#ece8dc"/><circle cx="559.4" cy="587.6" r="2.6" fill="none" stroke="#8a867c" stroke-width=".9"/><circle cx="559.4" cy="595.8" r="2.6" fill="none" stroke="#8a867c" stroke-width=".9"/></g>
<path d="M747.8 477.4 C747.8 480.1 747.3 487.1 747.8 493.5 C748.4 499.9 749.3 508.7 751.2 515.8 C753.1 522.8 755.8 530.1 759.0 535.8 C762.2 541.6 766.4 546.6 770.2 550.3 C773.9 554.1 776.8 556.4 781.3 558.1 C785.8 559.9 791.3 561.3 796.9 560.8 C802.5 560.4 809.6 558.4 814.8 555.5 C820.0 552.5 824.8 547.4 828.1 543.0 C831.5 538.6 834.3 533.7 834.8 529.2 C835.4 524.6 833.7 519.6 831.5 515.8 C829.3 511.9 825.4 508.2 821.5 506.2 C817.6 504.2 812.5 503.4 808.1 503.7 C803.6 504.1 799.0 505.4 794.7 508.2 C790.4 510.9 785.7 515.2 782.4 520.2 C779.1 525.2 776.5 532.1 775.1 538.1 C773.6 544.0 773.0 549.6 773.5 555.9 C774.0 562.2 775.2 569.3 778.0 576.0 C780.7 582.7 784.8 589.7 790.2 596.1 C795.6 602.4 802.5 608.9 810.3 613.9 C818.1 618.9 827.4 622.8 837.1 626.2 C846.7 629.5 857.9 632.1 868.3 634.0 C878.7 635.9 889.1 636.9 899.5 637.8 C909.9 638.7 923.9 639.3 930.8 639.6 C937.6 639.9 939.1 639.6 940.8 639.6" stroke="#060606" stroke-width="7" fill="none" stroke-linecap="butt" stroke-linejoin="round"/><path d="M910.4 610.2 L940.4 639.6 L910.4 668.6" stroke="#060606" stroke-width="7" fill="none" stroke-linecap="butt" stroke-linejoin="miter"/>
</svg>
<!--ART-END-->
<!-- menus -->
<span class="t" style="left:35px;top:5px;font-size:12px;letter-spacing:-0.34px;color:#ececec">File</span>
<span class="t" style="left:65px;top:5px;font-size:12px;letter-spacing:-0.17px;color:#ececec">Edit</span>
<span class="t" style="left:97px;top:5px;font-size:12px;letter-spacing:-0.07px;color:#ececec">Image</span>
<span class="t" style="left:142px;top:5px;font-size:12px;letter-spacing:-0.41px;color:#ececec">Layer</span>
<span class="t" style="left:182px;top:5px;font-size:12px;letter-spacing:-0.25px;color:#ececec">Type</span>
<span class="t" style="left:219px;top:5px;font-size:12px;letter-spacing:-0.39px;color:#ececec">Select</span>
<span class="t" style="left:262px;top:5px;font-size:12px;letter-spacing:-0.11px;color:#ececec">Filter</span>
<span class="t" style="left:300px;top:5px;font-size:12px;letter-spacing:-0.67px;color:#ececec">3D</span>
<span class="t" style="left:327px;top:5px;font-size:12px;letter-spacing:-0.20px;color:#ececec">View</span>
<span class="t" style="left:364px;top:5px;font-size:12px;letter-spacing:-0.19px;color:#ececec">Plugins</span>
<span class="t" style="left:414px;top:5px;font-size:12px;letter-spacing:0.05px;color:#ececec">Window</span>
<span class="t" style="left:470px;top:5px;font-size:12px;letter-spacing:-0.17px;color:#ececec">Help</span>

<!--MENUS2-->
<!-- options bar content -->
<div class="sep" style="left:53px"></div><div class="sep" style="left:102px"></div><div class="sep" style="left:256px"></div>
<div class="sep" style="left:408px"></div><div class="sep" style="left:537px"></div><div class="sep" style="left:666px"></div><div class="sep" style="left:709px"></div>
<div class="a" style="left:193px;top:32px;width:55px;height:21px;background:#424242;border:1px solid #646464;border-radius:3px"></div>
<div class="a" style="left:110px;top:36.2px;width:10.3px;height:10.3px;background:#d4d4d4;border-radius:2px"></div>
<div class="a" style="left:265px;top:36.2px;width:10.3px;height:10.3px;background:#d4d4d4;border-radius:2px"></div>
<svg width="1919" height="60" viewBox="0 0 1919 60" style="left:0;top:0">
 <!-- grip -->
 <g fill="#3e3e3e"><rect x="5" y="32" width="2" height="1"/><rect x="5" y="34" width="2" height="1"/><rect x="5" y="36" width="2" height="1"/><rect x="5" y="38" width="2" height="1"/><rect x="5" y="40" width="2" height="1"/><rect x="5" y="42" width="2" height="1"/><rect x="5" y="44" width="2" height="1"/><rect x="5" y="46" width="2" height="1"/><rect x="5" y="48" width="2" height="1"/><rect x="5" y="50" width="2" height="1"/></g>
 <!-- home -->
 <path d="M28 34.3 L36.3 42.6 L34 42.6 L34 49 L29.6 49 L29.6 44.3 L26.4 44.3 L26.4 49 L22 49 L22 42.6 L19.7 42.6 Z" fill="#e6e6e6"/>
 <!-- move tool icon -->
 <g stroke="#e0e0e0" stroke-width="1.3" fill="none"><path d="M69.5 36 V47 M64 41.5 H75"/></g>
 <path d="M69.5 33.8 L72.3 37 H66.7 Z M69.5 49.2 L72.3 46 H66.7 Z M61.8 41.5 L65 38.7 V44.3 Z M77.2 41.5 L74 38.7 V44.3 Z" fill="#e0e0e0"/>
 <path d="M87 41 L90.5 44.5 L94 41" stroke="#bdbdbd" stroke-width="1.1" fill="none"/>
 <!-- checks -->
 <path d="M112.2 41.4 L114.4 43.7 L118.2 38.9" stroke="#2a2a2a" stroke-width="1.7" fill="none"/>
 <path d="M267.2 41.4 L269.4 43.7 L273.2 38.9" stroke="#2a2a2a" stroke-width="1.7" fill="none"/>
 <path d="M237 42 L240.3 45.3 L243.6 42" stroke="#c4c4c4" stroke-width="1.1" fill="none"/>
 <!-- align icons -->
 <g fill="#a2a2a2">
  <rect x="424" y="34" width="1" height="15"/><rect x="426.5" y="37" width="6.5" height="4"/><rect x="426.5" y="43" width="10.5" height="4"/>
  <rect x="456" y="34" width="1" height="15"/><rect x="452.5" y="37" width="7.5" height="4"/><rect x="451" y="43" width="11" height="4"/>
  <rect x="487" y="34" width="1" height="15"/><rect x="479" y="37" width="6.5" height="4"/><rect x="475" y="43" width="10.5" height="4"/>
  <rect x="508" y="36.5" width="16" height="1"/><rect x="511" y="39.5" width="10.5" height="4.7"/><rect x="508" y="46.3" width="16" height="1"/>
  <rect x="551.5" y="36" width="14.5" height="1"/><rect x="553.7" y="38.3" width="4.1" height="10.4"/><rect x="560" y="38.3" width="4.1" height="6.7"/>
  <rect x="577.5" y="41.6" width="14.3" height="1"/><rect x="580" y="37" width="4.1" height="11"/><rect x="586" y="39" width="3.8" height="7"/>
  <rect x="603.7" y="46.7" width="14.3" height="1"/><rect x="605.8" y="35" width="4" height="10.5"/><rect x="612" y="39" width="4" height="6.5"/>
  <rect x="639.6" y="34" width="1" height="16"/><rect x="649.3" y="34" width="1" height="16"/><rect x="642.8" y="36.7" width="4.2" height="10.3"/>
 </g>
 <g fill="#dedede"><circle cx="681.8" cy="42" r="1.8"/><circle cx="687.8" cy="42" r="1.8"/><circle cx="693.8" cy="42" r="1.8"/></g>
 <!-- 3D mode icons (dim) -->
 <g stroke="#8c8c8c" fill="none" stroke-width="1">
  <circle cx="789.5" cy="38.8" r="3.6"/><path d="M785.3 40.3 C779 41.5 778 45 783.5 46.6 M793.2 41.2 C797.5 43 798 47 789.5 47.3"/>
  <circle cx="814" cy="41.6" r="7.9"/><circle cx="814" cy="41.6" r="3.6"/>
  <path d="M839.3 34 L842.3 37.3 H840.6 V40.3 H843.6 V38.6 L847.2 41.6 L843.6 44.6 V42.9 H840.6 V45.9 H842.3 L839.3 49.2 L836.3 45.9 H838 V42.9 H835 V44.6 L831.4 41.6 L835 38.6 V40.3 H838 V37.3 H836.3 Z"/>
  <circle cx="866" cy="41" r="2.9"/>
  <path d="M892.5 41.5 L900.5 36 M892.5 41.5 L900.5 47 M896.3 38.9 L899 41.5 L896.3 44.1"/>
 </g>
 <g fill="#8c8c8c">
  <path d="M782 45.2 L788.2 47.6 L782.8 48.2 Z"/><path d="M806.5 36.2 L810.5 34.6 L809.8 38.4 Z"/>
  <path d="M866 33.8 L868.3 36.3 H866.9 V37.5 H865.1 V36.3 H863.7 Z M866 49.6 L869.3 46 H867.2 V44.6 H864.8 V46 H862.7 Z M857 41 L860.6 38 V40 H862.4 V42 H860.6 V44 Z M875 41 L871.4 38 V40 H869.6 V42 H871.4 V44 Z"/>
  <path d="M883 38 H890 V40 L892 38.6 V44.4 L890 43 V45 H883 Z"/>
 </g>
 <!-- right icons -->
 <circle cx="1798.6" cy="42" r="7.8" fill="#e2e2e2"/>
 <path d="M1798.6 36.6 C1801 36.6 1802 38.6 1801.6 41 C1801.3 42.8 1800.6 43.4 1800.6 44.4 C1800.6 45.4 1803.5 46 1804.6 47.5 C1803 49 1801 49.8 1798.6 49.8 C1796.2 49.8 1794.2 49 1792.6 47.5 C1793.7 46 1796.6 45.4 1796.6 44.4 C1796.6 43.4 1795.9 42.8 1795.6 41 C1795.2 38.6 1796.2 36.6 1798.6 36.6 Z" fill="#535353"/>
 <circle cx="1804.8" cy="47.6" r="4.2" fill="#535353"/>
 <path d="M1804.8 44.2 V51 M1801.4 47.6 H1808.2" stroke="#e2e2e2" stroke-width="1.1"/>
 <circle cx="1826" cy="41" r="5.6" stroke="#e0e0e0" stroke-width="1.5" fill="none"/><path d="M1830 45.2 L1834 49" stroke="#e0e0e0" stroke-width="2" stroke-linecap="round"/>
 <rect x="1849.6" y="37.2" width="15" height="11.2" stroke="#e0e0e0" stroke-width="1.3" fill="none"/><rect x="1849" y="36.6" width="16.2" height="2" fill="#e0e0e0"/>
 <rect x="1852" y="40.6" width="2.6" height="1.4" fill="#e0e0e0"/><rect x="1852" y="42.8" width="2.6" height="1.4" fill="#e0e0e0"/><rect x="1852" y="45" width="2.6" height="1.4" fill="#e0e0e0"/>
 <path d="M1875 40 L1878.5 43.5 L1882 40" stroke="#bdbdbd" stroke-width="1.1" fill="none"/>
 <path d="M1899 38 H1895 V48 H1909 V38 H1905" stroke="#e2e2e2" stroke-width="1.7" fill="none"/><path d="M1902 35.5 V43.5" stroke="#e2e2e2" stroke-width="1.7"/><path d="M1902 33 L1905.2 36.6 H1898.8 Z" fill="#e2e2e2"/>
 <!-- window controls -->
 <path d="M1814.5 0 V15.5 Q1814.5 18.5 1817.5 18.5 H1913.5 Q1916.5 18.5 1916.5 15.5 V0" stroke="#6a6a6a" fill="none"/>
 <path d="M1842.5 0 V18 M1869.5 0 V18" stroke="#6a6a6a"/>
 <rect x="1823" y="11" width="10.3" height="3.2" fill="#bcbcbc"/>
 <rect x="1854.3" y="5.6" width="7" height="6.2" stroke="#bcbcbc" stroke-width="1.3" fill="none"/><rect x="1850.6" y="9" width="7" height="5.6" stroke="#bcbcbc" stroke-width="1.3" fill="#535353"/>
 <path d="M1889 5.5 L1897 13 M1897 5.5 L1889 13" stroke="#c4c4c4" stroke-width="2.2"/>
 <!-- Ps logo -->
 <rect x="5" y="4" width="16" height="15" rx="2.5" fill="#001e36"/>
</svg>
<span class="t" style="left:7.6px;top:4.8px;font-size:10px;font-weight:700;color:#31a8ff;letter-spacing:-0.3px">Ps</span>
<span class="t" style="left:125px;top:34.5px;font-size:10px;letter-spacing:-0.12px;color:#dadada">Auto-Select:</span>
<span class="t" style="left:202px;top:35.5px;font-size:10px;letter-spacing:-0.30px;color:#dadada">Layer</span>
<span class="t" style="left:280px;top:34.5px;font-size:10px;letter-spacing:-0.06px;color:#dadada">Show Transform Controls</span>
<span class="t" style="left:719.5px;top:34.5px;font-size:10px;letter-spacing:-0.17px;color:#868686">3D Mode:</span>

<!--OPTIONS2-->
<!-- left toolbar -->
<div class="a" style="left:0;top:59px;width:39px;height:972px;background:#535353"></div>
<div class="a" style="left:0;top:59px;width:1px;height:972px;background:#424242"></div>
<div class="a" style="left:1px;top:59px;width:38px;height:11px;background:#434343"></div>
<div class="a" style="left:1px;top:70px;width:38px;height:1px;background:#3c3c3c"></div>
<div class="a" style="left:38px;top:59px;width:3px;height:972px;background:linear-gradient(to right,#3b3b3b 0,#3b3b3b 1px,#4a4a4a 1px,#4a4a4a 2px,#3b3b3b 2px,#3b3b3b 3px)"></div>
<div class="a" style="left:4px;top:88px;width:31px;height:24px;background:#303030;border:1px solid #484848;border-radius:3px"></div>
<svg width="44" height="620" viewBox="0 0 44 620" style="left:0;top:0">
 <path d="M6.2 62.3 L8.6 64.5 L6.2 66.7 M10.2 62.3 L12.6 64.5 L10.2 66.7" stroke="#e4e4e4" stroke-width="1.2" fill="none"/>
 <path d="M10.5 74 V78 M12.5 74 V78 M14.5 74 V78 M16.5 74 V78 M18.5 74 V78 M20.5 74 V78 M22.5 74 V78 M24.5 74 V78 M26.5 74 V78 M28.5 74 V78" stroke="#464646" stroke-width="1"/>
 <g fill="#9a9a9a" id="tri">
  <path d="M32 132.3 V135.3 H29 Z"/><path d="M32 158.3 V161.3 H29 Z"/><path d="M32 184.3 V187.3 H29 Z"/><path d="M32 236.3 V239.3 H29 Z"/><path d="M32 262.3 V265.3 H29 Z"/><path d="M32 288.3 V291.3 H29 Z"/>
  <path d="M32 340.3 V343.3 H29 Z"/><path d="M32 366.3 V369.3 H29 Z"/><path d="M32 392.3 V395.3 H29 Z"/><path d="M32 418.3 V421.3 H29 Z"/><path d="M32 444.3 V447.3 H29 Z"/><path d="M32 496 V499 H29 Z"/><path d="M32 603.5 V606.5 H29 Z"/>
 </g>
 <!-- move -->
 <path d="M19.5 95 V106 M14 100.5 H25" stroke="#e2e2e2" stroke-width="1.4" fill="none"/>
 <path d="M19.5 92.7 L22.4 96 H16.6 Z M19.5 108.3 L22.4 105 H16.6 Z M11.7 100.5 L15 97.6 V103.4 Z M27.3 100.5 L24 97.6 V103.4 Z" fill="#e2e2e2"/>
 <!-- marquee -->
 <rect x="12.7" y="119.7" width="15" height="12" stroke="#d8d8d8" stroke-width="1.4" fill="none" stroke-dasharray="3.4 2"  stroke-dashoffset="1.7"/>
 <!-- lasso -->
 <g stroke="#d8d8d8" stroke-width="1.2" fill="none"><ellipse cx="21" cy="150.6" rx="7.8" ry="5.2" transform="rotate(-14 21 150.6)"/><circle cx="14.6" cy="155.8" r="1.5"/><path d="M15.6 157 C17.6 157 17.4 159 17 160.6"/></g>
 <!-- quick select -->
 <circle cx="15.2" cy="178.6" r="5.2" stroke="#d8d8d8" stroke-width="1.3" fill="none" stroke-dasharray="1.2 1.52"/>
 <path d="M28.8 171.6 C28.8 175 27.6 177 25.4 179.2 L23.2 177.2 C25 175 26.6 173.2 28.8 171.6 Z" fill="#d8d8d8"/>
 <path d="M22.4 177.8 L24.8 180 C24.8 183 21.6 184.2 17.8 183.6 C20 182.4 19.6 178.6 22.4 177.8 Z" fill="#d8d8d8"/>
 <!-- eyedropper + checker -->
 <g shape-rendering="crispEdges"><rect x="9" y="196" width="7" height="8" fill="#c4c4c4"/><path d="M10 197h1v1h-1zM12 197h1v1h-1zM14 197h1v1h-1zM11 198h1v1h-1zM13 198h1v1h-1zM10 199h1v1h-1zM12 199h1v1h-1zM14 199h1v1h-1zM11 200h1v1h-1zM13 200h1v1h-1zM10 201h1v1h-1zM12 201h1v1h-1zM14 201h1v1h-1zM11 202h1v1h-1zM13 202h1v1h-1z" fill="#161616"/></g>
 <path d="M26.4 196.8 C27.8 196 29.4 197.6 28.6 199 L26.4 201.6 L27.2 202.6 L25.6 204.2 L21.2 199.8 L22.8 198.2 L23.8 199 Z" fill="#d8d8d8"/>
 <path d="M22.2 201 L14.2 209 C13.2 210 13.4 211.4 14.4 211.6 C15.2 211.8 15.8 211.6 16.6 210.8 L24.4 203.2" stroke="#d8d8d8" stroke-width="1.2" fill="none"/>
 <!-- mixer brush -->
 <path d="M11.6 224 C13 226.4 14.4 227.8 14.4 229.4 C14.4 231 13.2 232 11.6 232 C10 232 8.8 231 8.8 229.4 C8.8 227.8 10.2 226.4 11.6 224 Z" fill="#d8d8d8"/>
 <path d="M28.2 222.8 C28 226 26 229 22.4 232.6 L20 230.4 C22.6 227 25 224.6 28.2 222.8 Z" fill="#d8d8d8"/>
 <path d="M19.2 231 L21.8 233.4 C21.6 236.6 18 238.2 13.6 237.6 C16.2 236.2 16 231.8 19.2 231 Z" fill="#d8d8d8"/>
 <!-- stamp -->
 <circle cx="20.4" cy="252.3" r="3.7" fill="#d8d8d8"/><path d="M18.8 255 H22 L22.6 258.6 H26 C26.8 258.6 27.2 259 27.2 259.8 V262 H13.8 V259.8 C13.8 259 14.2 258.6 15 258.6 H18.2 Z" fill="#d8d8d8"/><rect x="14.6" y="263" width="11.6" height="1.1" fill="#d8d8d8"/>
 <!-- eraser -->
 <path d="M22.6 275.4 L27.8 280.4 L22.4 285.6 L17 280.6 Z" fill="#d8d8d8"/>
 <path d="M17.4 280.4 L13.4 284.6 L17.2 288.4 H28 M17.2 288.4 L22.6 285" stroke="#d8d8d8" stroke-width="1.2" fill="none"/>
 <!-- bucket + checker -->
 <g shape-rendering="crispEdges"><rect x="9" y="300" width="7" height="8" fill="#c4c4c4"/><path d="M10 301h1v1h-1zM12 301h1v1h-1zM14 301h1v1h-1zM11 302h1v1h-1zM13 302h1v1h-1zM10 303h1v1h-1zM12 303h1v1h-1zM14 303h1v1h-1zM11 304h1v1h-1zM13 304h1v1h-1zM10 305h1v1h-1zM12 305h1v1h-1zM14 305h1v1h-1zM11 306h1v1h-1zM13 306h1v1h-1z" fill="#161616"/></g>
 <path d="M20.2 304.4 L27.8 310.6 L21.6 316.8 L16.2 311.2 Z" stroke="#d8d8d8" stroke-width="1.2" fill="none"/>
 <path d="M19.6 302.4 C21.4 302.8 23.2 305.6 23.6 309" stroke="#d8d8d8" stroke-width="1.2" fill="none"/>
 <path d="M29.6 310.4 C30.6 312 31 312.8 31 313.6 C31 314.6 30.4 315.2 29.6 315.2 C28.8 315.2 28.2 314.6 28.2 313.6 C28.2 312.8 28.6 312 29.6 310.4 Z" fill="#d8d8d8"/>
 <!-- T -->
 <path d="M15 327.3 H27 V331 H25.8 C25.6 329.6 25.2 329 24 329 H22.2 V338.8 C22.2 339.8 22.6 340 24 340 V341.2 H18 V340 C19.4 340 19.8 339.8 19.8 338.8 V329 H18 C16.8 329 16.4 329.6 16.2 331 H15 Z" fill="#d8d8d8"/>
 <!-- pen -->
 <path d="M23.6 354.6 L27.8 358.6 L25.6 360.8 L21.4 356.8 Z" fill="#d8d8d8"/>
 <path d="M20.8 357.6 L24.8 361.4 C24.4 364.4 22.6 366.2 13.6 367.8 C14.8 359.6 17.4 358 20.8 357.6 Z M13.6 367.8 L19 362.4" stroke="#d8d8d8" stroke-width="1.2" fill="none"/><circle cx="19.6" cy="361.8" r="1.2" fill="#d8d8d8"/>
 <!-- path select arrow -->
 <path d="M15 377 V392.4 L18.6 389.2 L20.8 393.8 L23 392.8 L20.8 388.2 L25.6 387.8 Z" fill="#d8d8d8"/>
 <!-- rectangle -->
 <rect x="12.6" y="405.6" width="15.2" height="12" fill="#6c6c6c" stroke="#dadada" stroke-width="1.2"/>
 <!-- hand -->
 <path d="M17 440 V433 C17 431.6 18.8 431.6 18.8 433 V438 H19.6 V431.6 C19.6 430.2 21.6 430.2 21.6 431.6 V438 H22.4 V432.6 C22.4 431.2 24.4 431.2 24.4 432.6 V439 H25.2 V435.4 C25.2 434 27.2 434 27.2 435.4 V441 C27.2 444.6 25.2 446.6 21.8 446.6 C18.6 446.6 17.2 445.4 15.4 442.6 L12.4 438.2 C11.6 437 13.2 436 14.2 437 Z" fill="#d8d8d8"/>
 <!-- zoom -->
 <circle cx="18.2" cy="462" r="5.8" stroke="#d8d8d8" stroke-width="1.5" fill="none"/><path d="M22.6 466.4 L27.4 471.2" stroke="#d8d8d8" stroke-width="2" stroke-linecap="round"/><path d="M17.6 459 C19.6 458.6 21 460 21.2 461.6" stroke="#bbb" stroke-width="0.9" fill="none"/>
 <!-- dots -->
 <circle cx="13.9" cy="490" r="2" fill="#d8d8d8"/><circle cx="19.9" cy="490" r="2" fill="#d8d8d8"/><circle cx="25.9" cy="490" r="2" fill="#d8d8d8"/>
 <!-- default colours / swap -->
 <rect x="8.4" y="512.4" width="6.6" height="6.4" fill="#dcdcdc"/><rect x="5.6" y="509.6" width="5.8" height="5.8" fill="#0a0a0a" stroke="#dcdcdc" stroke-width="0.9"/>
 <path d="M24.6 511.6 H29.2 V516.4" stroke="#d8d8d8" stroke-width="1.2" fill="none"/><path d="M22 511.6 L25.2 508.8 V514.4 Z M29.2 519.4 L26.4 516 H32 Z" fill="#d8d8d8"/>
 <!-- fg/bg -->
 <rect x="14.6" y="534.7" width="19" height="19" fill="#fff" stroke="#303030" stroke-width="0.9"/>
 <rect x="4.6" y="524.5" width="19" height="19" fill="#fff" stroke="#303030" stroke-width="0.9"/>
 <!-- quick mask -->
 <rect x="11.4" y="565.5" width="16.4" height="12.2" stroke="#d8d8d8" stroke-width="1.1" fill="none"/><circle cx="19.6" cy="571.5" r="3.7" stroke="#d8d8d8" stroke-width="1.1" fill="none" stroke-dasharray="1 1.32"/>
 <!-- screen mode -->
 <rect x="16.8" y="591.7" width="11" height="8.4" stroke="#d8d8d8" stroke-width="1.1" fill="none"/><rect x="11.4" y="594.8" width="11" height="8.6" stroke="#d8d8d8" stroke-width="1.1" fill="#535353"/><path d="M16.8 594.8 V600.1 H22.4" stroke="#d8d8d8" stroke-width="1.1" fill="none" opacity="0.0"/>
</svg>

<!--TOOLBAR2-->
<!--SCROLL-->
<!-- ===== scrollbars / status ===== -->
<div class="a" style="left:1576px;top:87px;width:16px;height:928px;background:#4a4a4a"></div>
<div class="a" style="left:1579px;top:374px;width:10px;height:348px;background:#6b6b6b"></div>
<div class="a" style="left:41px;top:1015px;width:1552px;height:16px;background:#4d4d4d"></div>
<div class="a" style="left:1576px;top:1015px;width:17px;height:16px;background:#535353"></div>
<div class="a" style="left:690px;top:1018px;width:470px;height:10px;background:#6b6b6b"></div>
<div class="a" style="left:89px;top:1015px;width:184px;height:16px;background:#535353"></div>
<!-- ===== right dock ===== -->
<div class="a" style="left:1592px;top:59px;width:3px;height:972px;background:linear-gradient(to right,#3b3b3b 0,#3b3b3b 1px,#4a4a4a 1px,#4a4a4a 2px,#3b3b3b 2px,#3b3b3b 3px)"></div>
<div class="a" style="left:1595px;top:59px;width:324px;height:11px;background:#424242"></div>
<div class="a" style="left:1595px;top:70px;width:324px;height:1px;background:#3a3a3a"></div>
<div class="a" style="left:1595px;top:71px;width:38px;height:960px;background:#535353"></div>
<div class="a" style="left:1595px;top:139px;width:38px;height:1.5px;background:#3e3e3e"></div>
<div class="a" style="left:1632px;top:71px;width:3px;height:960px;background:linear-gradient(to right,#3b3b3b 0,#3b3b3b 1px,#4a4a4a 1px,#4a4a4a 2px,#3b3b3b 2px,#3b3b3b 3px)"></div>
<!-- Color panel -->
<div class="a" style="left:1635px;top:71px;width:284px;height:28px;background:#424242;border-bottom:1px solid #3c3c3c"></div>
<div class="a" style="left:1635px;top:71px;width:42.5px;height:28px;background:#535353"></div>
<div class="a" style="left:1677.5px;top:71px;width:1px;height:27px;background:#3a3a3a"></div><div class="a" style="left:1737px;top:71px;width:1px;height:27px;background:#3a3a3a"></div>
<div class="a" style="left:1800px;top:71px;width:1px;height:27px;background:#3a3a3a"></div><div class="a" style="left:1857px;top:71px;width:1px;height:27px;background:#3a3a3a"></div>
<div class="a" style="left:1635px;top:99px;width:284px;height:118.5px;background:#535353"></div>
<div class="a" style="left:1635px;top:217.5px;width:284px;height:3px;background:#3c3c3c"></div>
<div class="a" style="left:1680px;top:106px;width:187px;height:91px;background:linear-gradient(to bottom,rgba(0,0,0,0),#000),linear-gradient(to right,#fff,#0058ff)"></div>
<div class="a" style="left:1884px;top:106px;width:19px;height:91px;background:linear-gradient(to bottom,#ff0000 0%,#ff00ff 16.7%,#0000ff 33.3%,#00ffff 50%,#00ff00 66.7%,#ffff00 83.3%,#ff0000 100%)"></div>
<div class="a" style="left:1654.5px;top:119px;width:19.5px;height:19.5px;background:#fff;border:1px solid #2a2a2a"></div>
<div class="a" style="left:1643.3px;top:108.2px;width:21.7px;height:21.7px;background:#fff;border:1px solid #8c8c8c"></div>
<div class="a" style="left:1644.3px;top:109.2px;width:19.7px;height:19.7px;background:#fff;border:1px solid #1e1e1e"></div>
<!-- Properties panel -->
<div class="a" style="left:1635px;top:220.5px;width:284px;height:28px;background:#424242;border-bottom:1px solid #3c3c3c"></div>
<div class="a" style="left:1635px;top:220.5px;width:66.5px;height:28px;background:#535353"></div>
<div class="a" style="left:1701.5px;top:220.5px;width:1px;height:27px;background:#3a3a3a"></div><div class="a" style="left:1777.5px;top:220.5px;width:1px;height:27px;background:#3a3a3a"></div><div class="a" style="left:1835.5px;top:220.5px;width:1px;height:27px;background:#3a3a3a"></div>
<div class="a" style="left:1635px;top:248.5px;width:284px;height:337px;background:#535353"></div>
<div class="a" style="left:1645.7px;top:254.8px;width:22.7px;height:22.5px;background:#383838;border-radius:3px"></div>
<div class="a" style="left:1635px;top:282px;width:284px;height:1px;background:#3e3e3e"></div>
<div class="a" style="left:1903px;top:283px;width:16px;height:278px;background:#4b4b4b"></div>
<div class="a" style="left:1905px;top:301px;width:12.3px;height:150px;background:#6b6b6b"></div>
<div class="a" style="left:1702px;top:313.3px;width:53px;height:16.6px;background:#3f3f3f;border:1px solid #686868"></div>
<div class="a" style="left:1702px;top:338.2px;width:53px;height:16.6px;background:#3f3f3f;border:1px solid #686868"></div>
<div class="a" style="left:1783px;top:313.3px;width:53px;height:16.6px;background:#4b4b4b;border:1px solid #606060"></div>
<div class="a" style="left:1783px;top:338.2px;width:53px;height:16.6px;background:#4b4b4b;border:1px solid #606060"></div>
<div class="a" style="left:1728.8px;top:366.5px;width:24.5px;height:24.6px;background:#343434;border-radius:3px"></div>
<div class="a" style="left:1702px;top:424px;width:133.6px;height:22px;background:#424242;border:1px solid #626262;border-radius:3px"></div>
<div class="a" style="left:1702px;top:449px;width:133.6px;height:22px;background:#424242;border:1px solid #626262;border-radius:3px"></div>
<div class="a" style="left:1724.3px;top:477.3px;width:111.3px;height:20.4px;background:#424242;border:1px solid #626262;border-radius:3px"></div>
<div class="a" style="left:1703.3px;top:477.7px;width:17.5px;height:17px;background:#fff;border:1px solid #303030"></div>
<div class="a" style="left:1635px;top:505px;width:268px;height:1px;background:#3e3e3e"></div>
<div class="a" style="left:1759.6px;top:540.3px;width:76px;height:20.4px;background:#424242;border:1px solid #626262;border-radius:3px"></div>
<div class="a" style="left:1635px;top:585.5px;width:284px;height:3px;background:#3c3c3c"></div>
<!-- Layers panel -->
<div class="a" style="left:1635px;top:588.5px;width:284px;height:28px;background:#424242;border-bottom:1px solid #3c3c3c"></div>
<div class="a" style="left:1635px;top:588.5px;width:47.2px;height:28px;background:#535353"></div>
<div class="a" style="left:1682.2px;top:588.5px;width:1px;height:27px;background:#3a3a3a"></div><div class="a" style="left:1741.5px;top:588.5px;width:1px;height:27px;background:#3a3a3a"></div><div class="a" style="left:1785.6px;top:588.5px;width:1px;height:27px;background:#3a3a3a"></div>
<div class="a" style="left:1635px;top:616.5px;width:284px;height:414.5px;background:#535353"></div>
<div class="a" style="left:1638.5px;top:625.6px;width:87.3px;height:20px;background:#424242;border:1px solid #626262;border-radius:3px"></div>
<div class="a" style="left:1635px;top:648.5px;width:284px;height:1px;background:#444"></div>
<div class="a" style="left:1638.5px;top:654px;width:129.2px;height:19.4px;background:#4f4f4f;border:1px solid #5d5d5d;border-radius:3px"></div>
<div class="a" style="left:1814.7px;top:654.7px;width:50.5px;height:15.6px;background:#4b4b4b;border:1px solid #5f5f5f"></div><div class="a" style="left:1850px;top:654.7px;width:1px;height:15.6px;background:#5f5f5f"></div>
<div class="a" style="left:1635px;top:676.5px;width:284px;height:1px;background:#444"></div>
<div class="a" style="left:1814.7px;top:683px;width:50.5px;height:15.6px;background:#4b4b4b;border:1px solid #5f5f5f"></div><div class="a" style="left:1850px;top:683px;width:1px;height:15.6px;background:#5f5f5f"></div>
<div class="a" style="left:1635px;top:707px;width:268px;height:299px;background:#4e4e4e"></div>
<div class="a" style="left:1903px;top:707px;width:16px;height:299px;background:#4b4b4b"></div>
<div class="a" style="left:1635px;top:707px;width:268px;height:111px;background:#535353"></div>
<div class="a" style="left:1635px;top:733px;width:268px;height:1px;background:#444"></div><div class="a" style="left:1635px;top:761px;width:268px;height:1px;background:#444"></div>
<div class="a" style="left:1635px;top:789px;width:268px;height:1px;background:#444"></div><div class="a" style="left:1635px;top:817.3px;width:268px;height:1px;background:#444"></div>
<div class="a" style="left:1664.3px;top:707px;width:1px;height:110.5px;background:#444"></div>
<div class="a" style="left:1635px;top:1006px;width:284px;height:1px;background:#3c3c3c"></div>
<div class="a" style="left:1635px;top:1007px;width:284px;height:24px;background:#535353"></div>
<svg width="1919" height="1031" viewBox="0 0 1919 1031" style="left:0;top:0">
<path d="M1622 62.4 L1619.6 64.6 L1622 66.8 M1626 62.4 L1623.6 64.6 L1626 66.8" stroke="#e4e4e4" stroke-width="1.2" fill="none"/>
<path d="M1906 62.4 L1908.4 64.6 L1906 66.8 M1910 62.4 L1912.4 64.6 L1910 66.8" stroke="#e4e4e4" stroke-width="1.2" fill="none"/>
<path d="M1604.5 74 V78 M1606.5 74 V78 M1608.5 74 V78 M1610.5 74 V78 M1612.5 74 V78 M1614.5 74 V78 M1616.5 74 V78 M1618.5 74 V78 M1620.5 74 V78 M1622.5 74 V78" stroke="#464646" stroke-width="1"/>
<rect x="1607.4" y="85.8" width="4.6" height="3.8" stroke="#dcdcdc" stroke-width="1" fill="none"/><rect x="1607.4" y="91.6" width="4.6" height="3.8" stroke="#dcdcdc" stroke-width="1" fill="none"/><rect x="1606.9" y="97" width="5.6" height="4.9" fill="#dcdcdc"/>
<path d="M1616.4 99.8 C1620.6 97.6 1621.6 93 1619.2 88.6" stroke="#dcdcdc" stroke-width="1.3" fill="none"/><path d="M1615 88.2 L1621 86.4 L1620.2 91.6 Z" fill="#dcdcdc"/>
<path d="M1608.6 115.2 H1619.6 Q1620.8 115.2 1620.8 116.4 V122.8 Q1620.8 124 1619.6 124 H1613.8 L1610.4 127.8 L1610.2 124 H1608.6 Q1607.4 124 1607.4 122.8 V116.4 Q1607.4 115.2 1608.6 115.2 Z" fill="#dcdcdc"/>
<path d="M1904 81.8 H1914.4 M1904 83.8 H1914.4 M1904 85.8 H1914.4 M1904 87.8 H1914.4" stroke="#cfcfcf" stroke-width="1"/>
<path d="M1904 231.8 H1914.4 M1904 233.8 H1914.4 M1904 235.8 H1914.4 M1904 237.8 H1914.4" stroke="#cfcfcf" stroke-width="1"/>
<path d="M1904 599.8 H1914.4 M1904 601.8 H1914.4 M1904 603.8 H1914.4 M1904 605.8 H1914.4" stroke="#cfcfcf" stroke-width="1"/>
<clipPath id="cf"><rect x="1680" y="106" width="187" height="91"/></clipPath>
<g clip-path="url(#cf)"><circle cx="1680" cy="106" r="5.4" fill="#fff" stroke="#111" stroke-width="1.2"/></g>
<path d="M1874.8 137.6 Q1874.8 136.4 1876 136.4 H1877.6 L1881.8 140.6 L1877.6 144.8 H1876 Q1874.8 144.8 1874.8 143.6 Z" fill="#e2e2e2"/>
<path d="M1652.4 260.2 H1658.8 L1662.6 264 V271.4 H1652.4 Z" stroke="#e4e4e4" stroke-width="1.2" fill="none"/><path d="M1658.6 260.4 V264.2 H1662.4" stroke="#e4e4e4" stroke-width="1" fill="none"/>
<path d="M1641.8 294.6 L1646 298.6 L1650.2 294.6" stroke="#b4b4b4" stroke-width="1.1" fill="none"/>
<path d="M1642.2 518 L1646.2 521.8 L1650.2 518" stroke="#b4b4b4" stroke-width="1.1" fill="none"/>
<rect x="1655.2" y="328.6" width="5.8" height="7.4" rx="2.9" stroke="#dcdcdc" stroke-width="1.4" fill="none"/><rect x="1655.2" y="333.8" width="5.8" height="7.4" rx="2.9" stroke="#dcdcdc" stroke-width="1.4" fill="none"/><path d="M1658.1 332.4 V337.4" stroke="#dcdcdc" stroke-width="1.4"/>
<rect x="1708.3" y="371.4" width="13.4" height="15" stroke="#dcdcdc" stroke-width="1" fill="none"/><circle cx="1715" cy="375.4" r="1.8" fill="#dcdcdc"/><path d="M1711.4 386 V380.6 Q1711.4 378.8 1713.2 378.8 H1716.8 Q1718.6 378.8 1718.6 380.6 V386 Z" fill="#dcdcdc"/>
<rect x="1733.4" y="373.6" width="15" height="11" stroke="#ececec" stroke-width="1.1" fill="none"/><circle cx="1740.9" cy="377.2" r="1.9" fill="#ececec"/><path d="M1736.2 384.4 V382.4 Q1736.2 380.4 1738.2 380.4 H1743.6 Q1745.6 380.4 1745.6 382.4 V384.4 Z" fill="#ececec"/>
<path d="M1825 434.8 L1828.5 438.3 L1832 434.8" stroke="#c8c8c8" stroke-width="1.1" fill="none"/>
<path d="M1825 460 L1828.5 463.5 L1832 460" stroke="#c8c8c8" stroke-width="1.1" fill="none"/>
<path d="M1825 486.8 L1828.5 490.3 L1832 486.8" stroke="#c8c8c8" stroke-width="1.1" fill="none"/>
<path d="M1825 550.2 L1828.5 553.7 L1832 550.2" stroke="#c8c8c8" stroke-width="1.1" fill="none"/>
<path d="M1715 635 L1718.5 638.5 L1722 635" stroke="#c8c8c8" stroke-width="1.1" fill="none"/>
<path d="M1757 662.4 L1760.3 665.6999999999999 L1763.6 662.4" stroke="#6e6e6e" stroke-width="1" fill="none"/>
<path d="M1854.5 661.6 L1857.8 664.9 L1861.1 661.6" stroke="#6e6e6e" stroke-width="1" fill="none"/>
<path d="M1854.5 689.8 L1857.8 693.0999999999999 L1861.1 689.8" stroke="#6e6e6e" stroke-width="1" fill="none"/>
<path d="M1908.6 296.6 L1912 293.4 L1915.4 296.6" stroke="#8e8e8e" stroke-width="1.1" fill="none"/><path d="M1908.6 549.4 L1912 552.6 L1915.4 549.4" stroke="#8e8e8e" stroke-width="1.1" fill="none"/>
<path d="M1649.8 542 H1666 V545.6 H1653.6 V558 H1649.8 Z" fill="#dcdcdc"/>
<g fill="#444"><rect x="1655.6" y="543.4" width="1" height="1"/><rect x="1658.4" y="543.4" width="1" height="1"/><rect x="1661.2" y="543.4" width="1" height="1"/><rect x="1664" y="543.4" width="1" height="1"/><rect x="1651.2" y="547.6" width="1" height="1"/><rect x="1651.2" y="550.4" width="1" height="1"/><rect x="1651.2" y="553.2" width="1" height="1"/><rect x="1651.2" y="556" width="1" height="1"/></g>
<path d="M1683.3 542.5 H1698.5 V557.5 H1683.3 Z M1688.4 542.5 V557.5 M1693.4 542.5 V557.5 M1683.3 547.5 H1698.5 M1683.3 552.5 H1698.5" stroke="#d4d4d4" stroke-width="1" fill="none"/>
<rect x="1716.4" y="542.5" width="15.2" height="15" fill="#5a5a5a" stroke="#d4d4d4" stroke-width="1"/>
<rect x="1717.00" y="543.00" width="3.55" height="3.5" fill="#8c8c8c"/><rect x="1724.10" y="543.00" width="3.55" height="3.5" fill="#8c8c8c"/><rect x="1720.55" y="546.50" width="3.55" height="3.5" fill="#8c8c8c"/><rect x="1727.65" y="546.50" width="3.55" height="3.5" fill="#8c8c8c"/><rect x="1717.00" y="550.00" width="3.55" height="3.5" fill="#8c8c8c"/><rect x="1724.10" y="550.00" width="3.55" height="3.5" fill="#8c8c8c"/><rect x="1720.55" y="553.50" width="3.55" height="3.5" fill="#8c8c8c"/><rect x="1727.65" y="553.50" width="3.55" height="3.5" fill="#8c8c8c"/>
<circle cx="1650.4" cy="634.6" r="3.3" stroke="#e2e2e2" stroke-width="1.4" fill="none"/><path d="M1652.8 637.2 L1656 640.2" stroke="#e2e2e2" stroke-width="1.8" stroke-linecap="round"/>
<rect x="1737.5" y="630.7" width="11.2" height="8.8" stroke="#dcdcdc" stroke-width="1" fill="none"/><path d="M1739.4 637.6 L1741.8 634 L1743.4 636 L1744.8 634.6 L1746.8 637.6 Z" fill="#dcdcdc"/>
<circle cx="1767.2" cy="635.2" r="5" stroke="#dcdcdc" stroke-width="1.1" fill="none"/><path d="M1770.9 631.7 A5 5 0 0 1 1763.7 638.9 Z" fill="#dcdcdc"/>
<path d="M1786.8 631 H1797 V633.8 H1796 C1795.8 632.8 1795.4 632.4 1794.4 632.4 H1793.2 V638.2 C1793.2 638.8 1793.6 639 1794.8 639 V640 H1789 V639 C1790.2 639 1790.6 638.8 1790.6 638.2 V632.4 H1789.4 C1788.4 632.4 1788 632.8 1787.8 633.8 H1786.8 Z" fill="#dcdcdc"/>
<rect x="1811.2" y="631.4" width="8.8" height="8.4" stroke="#dcdcdc" stroke-width="1.1" fill="none"/><g fill="#535353" stroke="#dcdcdc" stroke-width="0.9"><rect x="1810" y="630.2" width="2.4" height="2.4"/><rect x="1818.8" y="630.2" width="2.4" height="2.4"/><rect x="1810" y="638.6" width="2.4" height="2.4"/><rect x="1818.8" y="638.6" width="2.4" height="2.4"/></g>
<path d="M1838.4 635 V630.8 H1842 L1844.6 633.4 V640.4 H1841" stroke="#dcdcdc" stroke-width="1.1" fill="none"/><path d="M1841.8 631 V633.6 H1844.4" stroke="#dcdcdc" stroke-width="0.9" fill="none"/><rect x="1834.8" y="636" width="5.6" height="5.8" fill="#dcdcdc"/>
<rect x="1857.4" y="626.4" width="8.8" height="17.2" rx="4.4" fill="#464646" stroke="#6a6a6a" stroke-width="0.9"/><circle cx="1861.8" cy="630.2" r="4.2" fill="#dedede"/>
<g fill="#8a8a8a"><rect x="1674" y="685.2" width="11" height="10.8" fill="none" stroke="#8a8a8a" stroke-width="0.9"/><rect x="1674.4" y="685.6" width="3.4" height="3.4"/><rect x="1681.2" y="685.6" width="3.4" height="3.4"/><rect x="1677.8" y="689" width="3.4" height="3.4"/><rect x="1674.4" y="692.4" width="3.4" height="3.4"/><rect x="1681.2" y="692.4" width="3.4" height="3.4"/>
<path d="M1708.2 684.8 C1707.6 688 1705.6 690.8 1702.8 693 L1701 691.4 C1703 688.8 1705.4 686.4 1708.2 684.8 Z"/><path d="M1700.2 692 L1702.2 693.8 C1702 696.6 1699 698 1695.2 697.6 C1697.4 696.4 1697.4 692.6 1700.2 692 Z"/>
<path d="M1723.4 683.8 L1725.8 686.6 H1721 Z M1723.4 697.2 L1725.8 694.4 H1721 Z M1716.8 690.5 L1719.6 688.1 V692.9 Z M1730 690.5 L1727.2 688.1 V692.9 Z"/>
<path d="M1763 690.4 H1772.8 V697 H1763 Z M1766.8 693.6 a1.1 1.1 0 1 0 2.2 0 a1.1 1.1 0 1 0 -2.2 0 Z" fill-rule="evenodd"/></g>
<path d="M1723.4 686 V695 M1719 690.5 H1728" stroke="#8a8a8a" stroke-width="1.1"/>
<path d="M1765 690.6 V688.4 C1765 684.6 1770.8 684.6 1770.8 688.4 V690.6" stroke="#8a8a8a" stroke-width="1.4" fill="none"/>
<path d="M1741.8 685.6 V696 H1752.8 M1739 688.4 H1748.4 L1750.4 690.4 V698" stroke="#8a8a8a" stroke-width="1.1" fill="none" />
<path d="M1739 688.4 H1741 M1750.4 696 V698 M1751.4 686.4 L1752.4 685.4" stroke="#8a8a8a" stroke-width="1.1" stroke-dasharray="1 1"/>
<rect x="1669.2" y="711.2" width="32" height="19.6" fill="#2c2c2c"/><rect x="1670.2" y="712.2" width="30" height="17.6" fill="#fff"/><rect x="1670.7" y="713.5" width="3.6" height="3.9" fill="#cfcfcf"/><rect x="1677.9" y="713.5" width="3.6" height="3.9" fill="#cfcfcf"/><rect x="1674.3" y="717.4" width="3.6" height="3.9" fill="#cfcfcf"/><rect x="1681.5" y="717.4" width="3.6" height="3.9" fill="#cfcfcf"/><rect x="1670.7" y="721.3" width="3.6" height="3.9" fill="#cfcfcf"/><rect x="1677.9" y="721.3" width="3.6" height="3.9" fill="#cfcfcf"/><rect x="1674.3" y="725.2" width="3.6" height="3.9" fill="#cfcfcf"/><rect x="1681.5" y="725.2" width="3.6" height="3.9" fill="#cfcfcf"/><rect x="1685.6" y="713.9" width="15.2" height="16.8" fill="#555" stroke="#363636" stroke-width="1.1"/><path d="M1690.2 718.1 H1694.8 L1698 721.3 V727.1 H1694.4" stroke="#dedede" stroke-width="1.3" fill="none"/><path d="M1694.6 718.3 V721.5 H1697.8" stroke="#dedede" stroke-width="1" fill="none"/><path d="M1690.2 718.1 V723.3" stroke="#dedede" stroke-width="1.3" fill="none"/><rect x="1687.9" y="725.1" width="5" height="4.8" fill="#dedede"/>
<rect x="1669.2" y="739.4" width="32" height="19.6" fill="#2c2c2c"/><rect x="1670.2" y="740.4" width="30" height="17.6" fill="#fff"/><rect x="1670.7" y="741.7" width="3.6" height="3.9" fill="#cfcfcf"/><rect x="1677.9" y="741.7" width="3.6" height="3.9" fill="#cfcfcf"/><rect x="1674.3" y="745.6" width="3.6" height="3.9" fill="#cfcfcf"/><rect x="1681.5" y="745.6" width="3.6" height="3.9" fill="#cfcfcf"/><rect x="1670.7" y="749.5" width="3.6" height="3.9" fill="#cfcfcf"/><rect x="1677.9" y="749.5" width="3.6" height="3.9" fill="#cfcfcf"/><rect x="1674.3" y="753.4" width="3.6" height="3.9" fill="#cfcfcf"/><rect x="1681.5" y="753.4" width="3.6" height="3.9" fill="#cfcfcf"/><rect x="1671.2" y="741.7" width="13.6" height="15.6" fill="#fff"/><rect x="1671.2" y="744.2" width="10.8" height="10.6" fill="#6e4630"/><rect x="1672" y="749.2" width="2.6" height="4.4" fill="#4d79a8"/><rect x="1676.6" y="745.2" width="4.4" height="8" fill="#b8a692"/><rect x="1674.6" y="745.8" width="2.2" height="4" fill="#5a3322"/><rect x="1685.6" y="742.1" width="15.2" height="16.8" fill="#555" stroke="#363636" stroke-width="1.1"/><path d="M1690.2 746.3 H1694.8 L1698 749.5 V755.3 H1694.4" stroke="#dedede" stroke-width="1.3" fill="none"/><path d="M1694.6 746.5 V749.7 H1697.8" stroke="#dedede" stroke-width="1" fill="none"/><path d="M1690.2 746.3 V751.5" stroke="#dedede" stroke-width="1.3" fill="none"/><rect x="1687.9" y="753.3" width="5" height="4.8" fill="#dedede"/>
<rect x="1669.2" y="767.4" width="32" height="19.6" fill="#2c2c2c"/><rect x="1670.2" y="768.4" width="30" height="17.6" fill="#fff"/><rect x="1670.7" y="769.7" width="3.6" height="3.9" fill="#cfcfcf"/><rect x="1677.9" y="769.7" width="3.6" height="3.9" fill="#cfcfcf"/><rect x="1674.3" y="773.6" width="3.6" height="3.9" fill="#cfcfcf"/><rect x="1681.5" y="773.6" width="3.6" height="3.9" fill="#cfcfcf"/><rect x="1670.7" y="777.5" width="3.6" height="3.9" fill="#cfcfcf"/><rect x="1677.9" y="777.5" width="3.6" height="3.9" fill="#cfcfcf"/><rect x="1674.3" y="781.4" width="3.6" height="3.9" fill="#cfcfcf"/><rect x="1681.5" y="781.4" width="3.6" height="3.9" fill="#cfcfcf"/><circle cx="1684.6" cy="777.8" r="0.8" fill="#111"/><rect x="1685.6" y="770.1" width="15.2" height="16.8" fill="#555" stroke="#363636" stroke-width="1.1"/><path d="M1690.2 774.3 H1694.8 L1698 777.5 V783.3 H1694.4" stroke="#dedede" stroke-width="1.3" fill="none"/><path d="M1694.6 774.5 V777.7 H1697.8" stroke="#dedede" stroke-width="1" fill="none"/><path d="M1690.2 774.3 V779.5" stroke="#dedede" stroke-width="1.3" fill="none"/><rect x="1687.9" y="781.3" width="5" height="4.8" fill="#dedede"/>
<rect x="1669.4" y="796.2" width="31.6" height="18.4" fill="#fff" stroke="#2c2c2c" stroke-width="1"/>
<path d="M1644 721.8 C1646.4 716.6 1654.8 716.6 1657.2 721.8 C1654.8 727.0 1646.4 727.0 1644 721.8 Z" fill="#d8d8d8"/><circle cx="1650.6" cy="721.4" r="2.6" fill="#444"/><circle cx="1649.6" cy="720.6" r="0.9" fill="#d8d8d8"/>
<path d="M1644 749.8 C1646.4 744.6 1654.8 744.6 1657.2 749.8 C1654.8 755.0 1646.4 755.0 1644 749.8 Z" fill="#d8d8d8"/><circle cx="1650.6" cy="749.4" r="2.6" fill="#444"/><circle cx="1649.6" cy="748.6" r="0.9" fill="#d8d8d8"/>
<path d="M1644 777.8 C1646.4 772.6 1654.8 772.6 1657.2 777.8 C1654.8 783.0 1646.4 783.0 1644 777.8 Z" fill="#d8d8d8"/><circle cx="1650.6" cy="777.4" r="2.6" fill="#444"/><circle cx="1649.6" cy="776.6" r="0.9" fill="#d8d8d8"/>
<path d="M1644 805.8 C1646.4 800.6 1654.8 800.6 1657.2 805.8 C1654.8 811.0 1646.4 811.0 1644 805.8 Z" fill="#d8d8d8"/><circle cx="1650.6" cy="805.4" r="2.6" fill="#444"/><circle cx="1649.6" cy="804.6" r="0.9" fill="#d8d8d8"/>
<rect x="1877.4" y="803.6" width="9.2" height="6.6" stroke="#d4d4d4" stroke-width="1.1" fill="none"/><path d="M1879.4 803.4 V802 C1879.4 798.8 1884.6 798.8 1884.6 802 V803.4" stroke="#d4d4d4" stroke-width="1.1" fill="none"/><circle cx="1882" cy="807" r="1" fill="#d4d4d4"/>
<g stroke="#8a8a8a" fill="none" stroke-width="1.3"><path d="M1722.6 1015.6 H1720.4 C1716 1015.6 1716 1022 1720.4 1022 H1722.6 M1725.6 1015.6 H1727.8 C1732.2 1015.6 1732.2 1022 1727.8 1022 H1725.6 M1720.6 1018.8 H1727.6"/></g>
<rect x="1771" y="1013.4" width="13" height="9.4" fill="#8e8e8e"/><circle cx="1777.5" cy="1018" r="2.9" fill="#535353"/>
<circle cx="1805.2" cy="1019" r="5.2" stroke="#e2e2e2" stroke-width="1.2" fill="none"/><path d="M1809 1015.4 A5.2 5.2 0 0 1 1801.6 1022.8 Z" fill="#e2e2e2"/><path d="M1809.8 1024.6 H1813.2 L1811.5 1026.6 Z" fill="#e2e2e2"/>
<path d="M1825.8 1014.2 H1831 L1832 1015.4 H1838.2 V1023 H1825.8 Z" fill="#d6d6d6"/><path d="M1826.6 1013.2 H1830.6" stroke="#d6d6d6" stroke-width="0.8"/>
<rect x="1854.7" y="1013.9" width="10" height="10" stroke="#e2e2e2" stroke-width="1.2" fill="none"/><path d="M1859.7 1016 V1021.8 M1856.8 1018.9 H1862.6" stroke="#e2e2e2" stroke-width="1.3"/>
<g stroke="#8a8a8a" fill="none" stroke-width="1.1"><path d="M1881.4 1016 V1023.4 Q1881.4 1024.6 1882.6 1024.6 H1888.6 Q1889.8 1024.6 1889.8 1023.4 V1016 M1880.2 1015.6 H1891 M1883.6 1015.4 V1013.6 H1887.6 V1015.4 M1884 1017.6 V1022.6 M1887.2 1017.6 V1022.6"/></g>
<path d="M1809.8 1024.6 H1813.2 L1811.5 1026.6 Z" fill="#e2e2e2"/>
</svg>
<span class="t" style="left:1745.4px;top:1010.6px;font-size:13.5px;font-style:italic;color:#8a8a8a;letter-spacing:-0.3px;height:16px;line-height:16px">fx</span>

<span class="t" style="left:1644px;top:76.5px;font-size:10px;letter-spacing:-0.12px;color:#f0f0f0;font-weight:700">Color</span>
<span class="t" style="left:1686px;top:76.5px;font-size:10px;letter-spacing:-0.33px;color:#a6a6a6;font-weight:700">Swatches</span>
<span class="t" style="left:1747px;top:76.5px;font-size:10px;letter-spacing:-0.19px;color:#a6a6a6;font-weight:700">Gradients</span>
<span class="t" style="left:1810px;top:76.5px;font-size:10px;letter-spacing:-0.13px;color:#a6a6a6;font-weight:700">Patterns</span>
<span class="t" style="left:1644px;top:226.5px;font-size:10px;letter-spacing:-0.05px;color:#f0f0f0;font-weight:700">Properties</span>
<span class="t" style="left:1710px;top:226.5px;font-size:10px;letter-spacing:-0.10px;color:#a6a6a6;font-weight:700">Adjustments</span>
<span class="t" style="left:1787px;top:226.5px;font-size:10px;letter-spacing:-0.19px;color:#a6a6a6;font-weight:700">Libraries</span>
<span class="t" style="left:1674px;top:260.5px;font-size:10px;letter-spacing:0.05px;color:#d6d6d6">Document</span>
<span class="t" style="left:1657px;top:290.5px;font-size:10px;letter-spacing:0.10px;color:#f0f0f0;font-weight:700">Canvas</span>
<span class="t" style="left:1687px;top:315.5px;font-size:10px;letter-spacing:-0.45px;color:#d6d6d6">W</span>
<span class="t" style="left:1707.4px;top:315.5px;font-size:10px;letter-spacing:-0.26px;color:#f2f2f2">1920 px</span>
<span class="t" style="left:1769.7px;top:315.5px;font-size:10px;letter-spacing:-0.07px;color:#d6d6d6">X</span>
<span class="t" style="left:1788px;top:315.5px;font-size:10px;letter-spacing:0.07px;color:#777">0 px</span>
<span class="t" style="left:1689px;top:340.5px;font-size:10px;letter-spacing:-0.23px;color:#d6d6d6">H</span>
<span class="t" style="left:1707.4px;top:340.5px;font-size:10px;letter-spacing:-0.26px;color:#f2f2f2">1080 px</span>
<span class="t" style="left:1769.7px;top:340.5px;font-size:10px;letter-spacing:-0.07px;color:#d6d6d6">Y</span>
<span class="t" style="left:1788px;top:340.5px;font-size:10px;letter-spacing:0.07px;color:#777">0 px</span>
<span class="t" style="left:1703px;top:401.5px;font-size:10px;letter-spacing:-0.05px;color:#d6d6d6">Resolution: 300 pixels/inch</span>
<span class="t" style="left:1671px;top:426.5px;font-size:10px;letter-spacing:-0.15px;color:#d6d6d6">Mode</span>
<span class="t" style="left:1711px;top:428.5px;font-size:10px;letter-spacing:-0.54px;color:#ececec">RGB Color</span>
<span class="t" style="left:1711px;top:453.5px;font-size:10px;letter-spacing:-0.04px;color:#ececec">8 Bits/Channel</span>
<span class="t" style="left:1683px;top:479.5px;font-size:10px;letter-spacing:-0.35px;color:#d6d6d6">Fill</span>
<span class="t" style="left:1732.8px;top:480.5px;font-size:10px;letter-spacing:0.01px;color:#ececec">White</span>
<span class="t" style="left:1659px;top:513.3px;font-size:10px;letter-spacing:0.02px;color:#f0f0f0;font-weight:700">Rulers &amp; Grids</span>
<span class="t" style="left:1768px;top:543.5px;font-size:10px;letter-spacing:-0.36px;color:#ececec">Pixels</span>
<span class="t" style="left:1644px;top:594.5px;font-size:10px;letter-spacing:-0.44px;color:#f0f0f0;font-weight:700">Layers</span>
<span class="t" style="left:1691px;top:594.5px;font-size:10px;letter-spacing:-0.31px;color:#a6a6a6;font-weight:700">Channels</span>
<span class="t" style="left:1751.2px;top:594.5px;font-size:10px;letter-spacing:-0.35px;color:#a6a6a6;font-weight:700">Paths</span>
<span class="t" style="left:1661px;top:628.5px;font-size:10px;letter-spacing:-0.15px;color:#e6e6e6">Kind</span>
<span class="t" style="left:1647.5px;top:656.5px;font-size:10px;letter-spacing:-0.21px;color:#7c7c7c">Normal</span>
<span class="t" style="left:1774.2px;top:656.5px;font-size:10px;letter-spacing:-0.11px;color:#7c7c7c">Opacity:</span>
<span class="t" style="left:1820.3px;top:656.5px;font-size:10px;letter-spacing:-0.34px;color:#707070">100%</span>
<span class="t" style="left:1641px;top:684.5px;font-size:10px;letter-spacing:-0.18px;color:#7c7c7c">Lock:</span>
<span class="t" style="left:1796px;top:684.5px;font-size:10px;letter-spacing:-0.31px;color:#7c7c7c">Fill:</span>
<span class="t" style="left:1820.3px;top:684.5px;font-size:10px;letter-spacing:-0.34px;color:#707070">100%</span>
<span class="t" style="left:1710px;top:714.5px;font-size:10px;letter-spacing:-0.03px;color:#ececec">Multiple Clipping Paths</span>
<span class="t" style="left:1710px;top:742.5px;font-size:10px;letter-spacing:-0.33px;color:#ececec">NameMesh</span>
<span class="t" style="left:1710px;top:770.5px;font-size:10px;letter-spacing:-0.01px;color:#ececec">Curving-Arrow-PNG-Pic</span>
<span class="t" style="left:1710px;top:798.5px;font-size:10px;letter-spacing:0.16px;color:#ececec;font-style:italic">Background</span>

<!-- doc tab + status -->
<div class="a" style="left:41px;top:59px;width:223.5px;height:28px;background:#535353"></div>
<div class="a" style="left:264.5px;top:59px;width:1px;height:28px;background:#3a3a3a"></div>
<div class="a" style="left:41px;top:1015px;width:48px;height:16px;background:#4b4b4b"></div>
<svg width="1919" height="1031" viewBox="0 0 1919 1031" style="left:0;top:0">
<path d="M247.6 69.4 L254.2 76 M254.2 69.4 L247.6 76" stroke="#b9b9b9" stroke-width="1.1"/>
<path d="M262.6 1019 L265.4 1023.4 L262.6 1027.8" stroke="#c8c8c8" stroke-width="1.1" fill="none"/>
<path d="M285.6 1020 L282.4 1023.4 L285.6 1026.8" stroke="#8e8e8e" stroke-width="1.1" fill="none"/>
<path d="M1564.4 1020.8 L1567.8 1024.3 L1564.4 1027.8" stroke="#8e8e8e" stroke-width="1.1" fill="none"/>
<path d="M1581.4 100.4 L1585 96.8 L1588.6 100.4" stroke="#8e8e8e" stroke-width="1.1" fill="none"/>
<path d="M1581.4 1003.4 L1585 1007 L1588.6 1003.4" stroke="#8e8e8e" stroke-width="1.1" fill="none"/>
</svg>
<span class="t" style="left:48px;top:1016.5px;font-size:10px;letter-spacing:-0.24px;color:#dadada">66.67%</span>
<span class="t" style="left:113px;top:1016.5px;font-size:10px;letter-spacing:-0.07px;color:#d0d0d0">1920 px x 1080 px (300 ppi)</span>
<span class="t" style="left:51px;top:66px;font-size:11px;letter-spacing:0.11px;color:#ebebeb;font-weight:700">Untitled-1 @ 66.7% (RGB/8/CMYK) *</span>
<!--RIGHT2-->
</body>
</html>
